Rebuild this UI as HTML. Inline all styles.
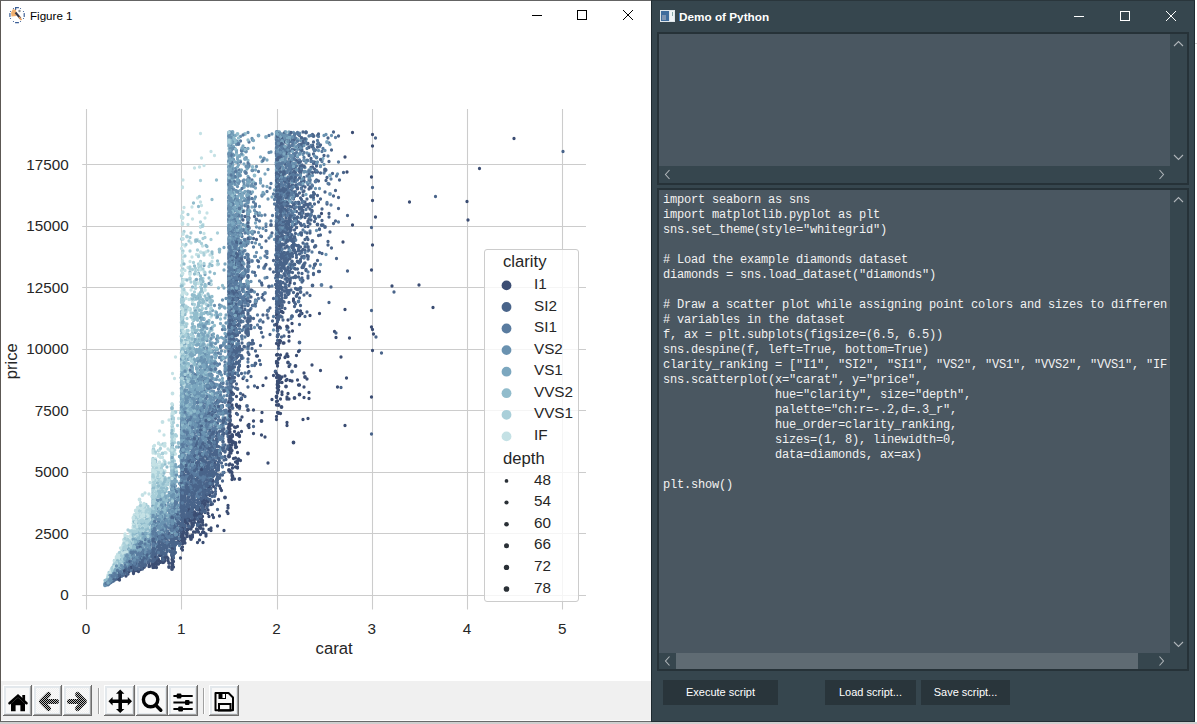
<!DOCTYPE html><html><head><meta charset="utf-8"><style>
*{margin:0;padding:0;box-sizing:border-box}
html,body{width:1197px;height:724px;overflow:hidden;background:#cfcfcf;position:relative;font-family:"Liberation Sans",sans-serif}
.abs{position:absolute}
#lw{left:0;top:0;width:651px;height:722px;background:#fff;border-left:1px solid #5c5854;border-top:1px solid #646464;border-bottom:1px solid #6a6a6a}
#tb{left:1px;top:681px;width:650px;height:40px;background:#f0f0f0}
.btn{position:absolute;top:5px;height:30px;background:#f0f0f0;border-top:1px solid #fff;border-left:1px solid #fff;border-right:1px solid #6d6d6d;border-bottom:1px solid #6d6d6d;box-shadow:inset -1px -1px 0 #a0a0a0}
.sep{position:absolute;top:7px;width:2px;height:26px;border-left:1px solid #a0a0a0;border-right:1px solid #fff}
#rw{left:651px;top:0;width:544px;height:722px;background:#36464e;border-left:1px solid #1e2a30;border-top:1px solid #2a363c;border-right:1px solid #1e2a30;border-bottom:1px solid #222e34}
.panel{position:absolute;background:#4a5761;border:2px solid #263238}
.code{position:absolute;left:663px;top:193px;font-family:"Liberation Mono",monospace;font-size:12px;letter-spacing:-0.2px;line-height:15px;color:#f2f2f2;white-space:pre}
.sb{position:absolute;background:#36464e}
.sbtn{position:absolute;top:680px;height:25px;background:#29353b;color:#fff;font-size:11px;text-align:center;line-height:25px}
</style></head><body>
<div id="lw" class="abs"></div>
<div class="abs" style="left:30px;top:9px;font-size:11.6px;color:#000">Figure 1</div>
<svg class="abs" style="left:0;top:0" width="651" height="31">
 <g fill="#3a5e96">
  <rect x="15" y="7" width="4" height="1.2" rx="0.5"/><rect x="15" y="22" width="4" height="1.2" rx="0.5"/>
  <rect x="9.3" y="13" width="1.2" height="4" rx="0.5"/><rect x="23.6" y="13" width="1.2" height="4" rx="0.5"/>
  <circle cx="13.5" cy="8.5" r="0.6"/><circle cx="20.5" cy="8.5" r="0.6"/><circle cx="10.5" cy="11.5" r="0.6"/><circle cx="23.5" cy="11.5" r="0.6"/>
  <circle cx="10.5" cy="18.5" r="0.6"/><circle cx="23.5" cy="18.5" r="0.6"/><circle cx="13.5" cy="21.5" r="0.6"/><circle cx="20.5" cy="21.5" r="0.6"/>
  <rect x="15" y="7" width="1.2" height="3"/>
 </g>
 <path d="M13 9l3 1 0.5 6-5 0.5-0.5-4z" fill="#f0b070"/>
 <path d="M15.5 12.5l5 6" stroke="#334" stroke-width="2"/>
 <path d="M19 17l2.5 3" stroke="#e8a060" stroke-width="1.8"/>
 <circle cx="19.5" cy="11" r="1.2" fill="#8a8f99"/>
 <path d="M532 15.5h10" stroke="#000" stroke-width="1"/>
 <rect x="577.5" y="10.5" width="9" height="9" fill="none" stroke="#000" stroke-width="1"/>
 <path d="M623 10l10 10M633 10l-10 10" stroke="#000" stroke-width="1"/>
</svg>
<svg width="1197" height="724" style="position:absolute;left:0;top:0"><g stroke="#cccccc" stroke-width="1.1"><line x1="86.5" y1="109.0" x2="86.5" y2="609.5"/><line x1="181.5" y1="109.0" x2="181.5" y2="609.5"/><line x1="277.5" y1="109.0" x2="277.5" y2="609.5"/><line x1="372.5" y1="109.0" x2="372.5" y2="609.5"/><line x1="467.5" y1="109.0" x2="467.5" y2="609.5"/><line x1="562.5" y1="109.0" x2="562.5" y2="609.5"/><line x1="82.2" y1="595.5" x2="586.0" y2="595.5"/><line x1="82.2" y1="533.5" x2="586.0" y2="533.5"/><line x1="82.2" y1="472.5" x2="586.0" y2="472.5"/><line x1="82.2" y1="410.5" x2="586.0" y2="410.5"/><line x1="82.2" y1="349.5" x2="586.0" y2="349.5"/><line x1="82.2" y1="287.5" x2="586.0" y2="287.5"/><line x1="82.2" y1="226.5" x2="586.0" y2="226.5"/><line x1="82.2" y1="164.5" x2="586.0" y2="164.5"/></g><g transform="scale(0.5)" fill="none" stroke-linecap="round"><path stroke="#3b4d73" stroke-width="6.6" d="M0 0m608 746h0m-9 24h0m-135 15h0m110 13h0m-19 27h0m6 2h0m-101 11h0m93-5h0m-72 7h0m2 23h0m-18 10h0m65 1h0m-72 25h0m17 35h0m-15 10h0m-31 58h0m-2 33h0m-22 6h0m30 11h0m-48 12h0m18 1h0m-37 11h0m-32 45h0m-30 14h0"/><path stroke="#49648a" stroke-width="7.6" d="M0 0m597 405h0m23 3h0m-40 31h0m-88 51h0m103 33h0m-42 28h0m27 10h0m4 72h0m-113 83h0m6 24h0m-19 91h0m-21 100h0"/><path stroke="#597b9f" stroke-width="7.6" d="M0 0m633 328h0m-152 104h0m15 233h0"/><path stroke="#49648a" stroke-width="6.6" d="M0 0m677 272h0m-69 49h0m-4 9h0m0 2h0m14 14h0m13-2h0m34 3h0m-106 12h0m44 3h0m3 9h0m14 3h0m38-6h0m-48 36h0m-44 9h0m46-4h0m-38 12h0m19 2h0m51-5h0m-148 12h0m68 3h0m31 1h0m34 9h0m-65 22h0m-11 7h0m8 21h0m9 18h0m-38 18h0m25 14h0m80 0h0m-71 22h0m23 2h0m-103 12h0m29 10h0m38-3h0m6 21h0m-54 4h0m88 12h0m-114 21h0m2 0h0m74 0h0m21 11h0m-21 7h0m13 10h0m-68 15h0m-35 3h0m107 22h0m-95 14h0m42-5h0m-36 26h0m-23 58h0m2-3h0m-4 13h0m2 10h0m-14 59h0m-13 9h0m-2 84h0m-15 12h0m-27 25h0m36-6h0m-47 27h0m-27 55h0m-2 17h0"/><path stroke="#3b4d73" stroke-width="7.6" d="M0 0m460 841h0m-172 293h0m18-5h0"/><path stroke="#a9cfd9" stroke-width="7.6" d="M0 0m370 618h0m-63 281h0"/><path stroke="#c4e1e5" stroke-width="7.6" d="M0 0m412 571h0"/><path stroke="#7ca7bf" stroke-width="7.6" d="M0 0m477 361h0m-61 250h0m57 54h0"/><path stroke="#a9cfd9" stroke-width="6.6" d="M0 0m382 466h0m0 132h0m30 10h0m-44 14h0m-24 244h0m-4 96h0m-67 65h0m27 3h0"/><path stroke="#c4e1e5" stroke-width="6.6" d="M0 0m366 360h0m18 54h0m26 22h0m-40 56h0m27 19h0m11 32h0m-43 35h0m-21 252h0m-38 72h0m19 13h0m-50 100h0m-8 27h0m-13 31h0"/><path stroke="#7ca7bf" stroke-width="6.6" d="M0 0m553 270h0m4-6h0m-84 37h0m10 0h0m70-5h0m-65 32h0m46 45h0m78 16h0m-135 16h0m13-4h0m-7 16h0m-61 152h0m-2 58h0m21 20h0m-75 8h0m35-2h0m30 47h0m-7 15h0m-35 8h0m2-1h0m38 0h0m-44 19h0m37-3h0m-10 12h0m23-5h0m-78 149h0m-27 90h0m4 37h0"/><path stroke="#6a92b0" stroke-width="7.6" d="M0 0m458 395h0m26-3h0m153 41h0m-158 33h0m-21 185h0m-10 37h0m0 113h0"/><path stroke="#597b9f" stroke-width="6.6" d="M0 0m635 271h0m-27 7h0m6 10h0m25 5h0m-48 14h0m38 17h0m-63 15h0m29 30h0m-112 35h0m85-1h0m-89 24h0m74 8h0m11-3h0m29 15h0m84-3h0m-145 17h0m-48 12h0m88 0h0m44 29h0m8 2h0m-113 9h0m-30 16h0m7 40h0m56 3h0m-73 4h0m10 13h0m36 8h0m-40 45h0m38 8h0m-44 44h0m19 0h0m-4 22h0m-53 11h0m38 19h0m-6 12h0m-36 10h0m2 37h0m12 45h0m3 2h0m-1 6h0m-4 37h0"/><path stroke="#91bccc" stroke-width="6.6" d="M0 0m467 276h0m12 106h0m-55 17h0m-23 66h0m11 26h0m74 35h0m-57 21h0m-24 38h0m11 3h0m-13 32h0m-40 11h0m0 4h0m34 18h0m-34 5h0m55 8h0m-40 15h0m13 20h0m-15 26h0m51 12h0m-68 174h0m-6 36h0m-19 43h0"/><path stroke="#6a92b0" stroke-width="6.6" d="M0 0m650 301h0m-44 8h0m10 12h0m-44 10h0m103 17h0m-168 25h0m84 15h0m-6 46h0m-99 15h0m96 32h0m-80 82h0m7 21h0m-57 13h0m-13 13h0m-33 49h0m141 1h0m-133 21h0m36 35h0m6 18h0m-40 31h0m30 0h0m-15 8h0m31-2h0m-50 12h0m25 14h0m-6 47h0m-80 128h0m-13 57h0m0 3h0"/><path stroke="#3b4d73" stroke-width="7.6" d="M0 0m599 789h0m-10 7h0m-131 10h0m17 116h0"/><path stroke="#6a92b0" stroke-width="6.6" d="M0 0m473 282h0m145 26h0m-29 11h0m-93 16h0m114 0h0m-135 13h0m15-4h0m36 28h0m-38 14h0m40 2h0m-40 13h0m101 22h0m-105 15h0m149 23h0m-116 4h0m-36 16h0m160 48h0m-111 27h0m-55 11h0m9 34h0m-55 10h0m-9 122h0m2-4h0m-35 18h0m2 31h0m54 17h0m5-3h0m-24 14h0m22 49h0m-7 1h0m-90 118h0m-11 26h0m0 20h0"/><path stroke="#a9cfd9" stroke-width="6.6" d="M0 0m422 479h0m-31 4h0m10 47h0m-6 36h0m-30 11h0m-2 25h0m0 11h0m3 0h0m0 24h0m6 11h0m15 12h0m-15 6h0m-9 19h0m51 47h0m-59 119h0m-10 66h0m-15 74h0m-45 31h0"/><path stroke="#91bccc" stroke-width="6.6" d="M0 0m469 285h0m-36 75h0m-11 202h0m15 14h0m-19 16h0m-23 45h0m4 15h0m-15 16h0m26 7h0m-36 37h0m11 4h0m-22 27h0m-18 172h0m-3 58h0m-8 4h0m8 23h0m-40 26h0"/><path stroke="#49648a" stroke-width="6.6" d="M0 0m597 269h0m-31 4h0m21 14h0m12 8h0m5-2h0m14 1h0m9 33h0m-38 15h0m2-6h0m0 37h0m12 3h0m3 15h0m29 0h0m-48 7h0m-7 3h0m11 4h0m38 3h0m-59 15h0m88 4h0m13 15h0m-107 11h0m46 0h0m-66 13h0m32 16h0m-12 16h0m54 2h0m21 5h0m-86 14h0m40-4h0m-97 11h0m65-3h0m2 3h0m-2 3h0m-14 15h0m10 2h0m-34 20h0m41 13h0m4 3h0m4-6h0m6 11h0m42 4h0m-56 6h0m-80 10h0m84-3h0m-15 11h0m61 9h0m-137 15h0m11-6h0m122 0h0m-65 9h0m21-2h0m-87 11h0m15 0h0m-15 14h0m61 4h0m15 1h0m-67 23h0m8 0h0m25-2h0m-56 5h0m0 54h0m44 22h0m-64 52h0m-6 16h0m-6 38h0m15 17h0m-3 38h0m-20 5h0m12-2h0m-2 24h0m-21 22h0m4 1h0m-4 14h0m-61 76h0m-19 22h0m6-2h0m9 1h0m-17 14h0"/><path stroke="#597b9f" stroke-width="7.6" d="M0 0m458 550h0m25 45h0m-35 227h0"/><path stroke="#6a92b0" stroke-width="7.6" d="M0 0m458 386h0m38 42h0"/><path stroke="#7ca7bf" stroke-width="6.6" d="M0 0m496 297h0m-19 33h0m-6 39h0m4 26h0m69-1h0m-130 206h0m0 57h0m21 42h0m-46 10h0m35 95h0m-71 130h0m-17 96h0"/><path stroke="#a9cfd9" stroke-width="7.6" d="M0 0m363 572h0m-12 252h0"/><path stroke="#c4e1e5" stroke-width="6.6" d="M0 0m363 435h0m-12 279h0m-34 173h0m-10 6h0m14-3h0m9 52h0m-66 119h0m-21 39h0"/><path stroke="#597b9f" stroke-width="6.6" d="M0 0m637 273h0m-139 11h0m74-1h0m8-3h0m-101 60h0m7 22h0m67 7h0m38 14h0m-116 1h0m32 20h0m-34 18h0m126-4h0m-31 10h0m71 31h0m-143 23h0m-21 17h0m103 1h0m25 6h0m-126 27h0m6 0h0m34 1h0m0-1h0m53 25h0m-112 9h0m53 33h0m-66 59h0m-8 47h0m13 18h0m0 7h0m21-3h0m-47 28h0m-2 5h0m30 15h0m10 4h0m-25 5h0m-15 160h0m-82 89h0"/><path stroke="#3b4d73" stroke-width="6.6" d="M0 0m580 566h0m15 22h0m-8 10h0m-28 14h0m2 146h0m-99 32h0m114-3h0m-32 12h0m17-1h0m17 0h0m-25 5h0m-93 30h0m114 18h0m-116 59h0m-36 99h0m-17 13h0m-21 3h0m19 2h0m-12 8h0m10 9h0m21 12h0m-48 12h0m21 17h0m-82 37h0m6 1h0m-42 20h0"/><path stroke="#c4e1e5" stroke-width="7.6" d="M0 0m233 1114h0"/><path stroke="#49648a" stroke-width="7.6" d="M0 0m603 276h0m-50 53h0m72 242h0m-24 5h0m-143 26h0m106 8h0m-28 11h0m-69 51h0m31 15h0m-23 91h0m-137 297h0"/><path stroke="#91bccc" stroke-width="7.6" d="M0 0m509 351h0m-120 245h0m-15 77h0"/><path stroke="#7ca7bf" stroke-width="7.6" d="M0 0m465 341h0m88 30h0"/><path stroke="#c4e1e5" stroke-width="6.6" d="M0 0m365 374h0m-2 58h0m2 57h0m11 46h0m-11 29h0m-2 33h0m3 39h0m56-2h0m-59 21h0m-35 274h0m-47 76h0m-8 26h0m-21 43h0m8-2h0m-50 94h0"/><path stroke="#a9cfd9" stroke-width="7.6" d="M0 0m399 630h0"/><path stroke="#597b9f" stroke-width="6.6" d="M0 0m564 269h0m6 7h0m29 13h0m-17 38h0m40-4h0m-23 5h0m-94 13h0m147-1h0m21 12h0m-177 13h0m6 22h0m87-2h0m-93 56h0m112 8h0m-34 11h0m-65 4h0m73 5h0m-4 26h0m-46 8h0m-61 28h0m25 20h0m-17 39h0m0 2h0m4 25h0m-16 25h0m6 49h0m-34 24h0m4 51h0m-35 19h0m44 15h0m-28 14h0m21-3h0m-10 12h0m0 45h0m-11 33h0m-71 84h0m2 26h0m-17 44h0"/><path stroke="#3b4d73" stroke-width="6.6" d="M0 0m566 625h0m38 2h0m-45 59h0m2-4h0m-29 74h0m-70 12h0m146 6h0m-133 40h0m-2 13h0m-13 78h0m2 37h0m-23 30h0m-54 61h0m4 12h0m-15 20h0"/><path stroke="#a9cfd9" stroke-width="6.6" d="M0 0m401 444h0m-35 58h0m-1 20h0m34 10h0m19 1h0m-33 6h0m4 45h0m14 2h0m-37 57h0m2 2h0m31 52h0m-15 20h0m-46 209h0m-12 23h0m6 22h0m-30 47h0m-14 6h0"/><path stroke="#6a92b0" stroke-width="6.6" d="M0 0m553 269h0m59 9h0m-46 34h0m-76 31h0m107-2h0m-133 11h0m57 9h0m-33 10h0m-17 13h0m101 19h0m15 3h0m-68 7h0m82 23h0m-122 16h0m40 4h0m-46 9h0m10 4h0m114 0h0m-99 5h0m91-1h0m10 53h0m-101 57h0m-21 3h0m-74 67h0m42 38h0m-33 23h0m31 6h0m11 43h0m-40 12h0m21 54h0m6 46h0m-80 130h0"/><path stroke="#6a92b0" stroke-width="7.6" d="M0 0m603 298h0m-145 210h0m-63 87h0m86 13h0m-48 250h0"/><path stroke="#49648a" stroke-width="7.6" d="M0 0m572 526h0m-17 147h0m-71 26h0m67 44h0m-106 127h0m-20 76h0m0 6h0"/><path stroke="#49648a" stroke-width="6.6" d="M0 0m574 286h0m27 8h0m0 5h0m62 1h0m-13 42h0m-84 19h0m86 0h0m-42 13h0m-44 6h0m10-3h0m0 30h0m61-3h0m-71 7h0m33 3h0m-90 19h0m107 9h0m-23 13h0m48 15h0m-118 3h0m87 6h0m-51 5h0m47 2h0m-32 8h0m13 0h0m42 0h0m-19 7h0m-42 7h0m2-2h0m10 11h0m-12 5h0m33 1h0m-16 7h0m21 5h0m-97 10h0m69 0h0m-17 7h0m13 4h0m42-4h0m0 4h0m-114 38h0m68 1h0m29 1h0m-38 5h0m2 2h0m15 2h0m-88 14h0m0 17h0m67 3h0m4-7h0m-90 24h0m-6 29h0m12-3h0m2 14h0m76 13h0m-76 13h0m-8 54h0m-9 8h0m17 33h0m-44 30h0m21 9h0m-19 37h0m-8 12h0m2 58h0m-11 9h0m-8 19h0m13-6h0m-41 52h0m-10 7h0m-25 54h0"/><path stroke="#7ca7bf" stroke-width="7.6" d="M0 0m458 401h0"/><path stroke="#91bccc" stroke-width="7.6" d="M0 0m410 573h0m-11 103h0m32 82h0m-68 62h0"/><path stroke="#597b9f" stroke-width="7.6" d="M0 0m580 344h0m9 12h0m-112 88h0m21 12h0m-15 41h0m-63 264h0m-194 401h0"/><path stroke="#3b4d73" stroke-width="7.6" d="M0 0m555 784h0m-76 29h0m-78 243h0"/><path stroke="#7ca7bf" stroke-width="6.6" d="M0 0m568 272h0m-15 23h0m-65 6h0m33 13h0m-54 34h0m134 5h0m2 6h0m-145 15h0m7 31h0m-17 90h0m29-7h0m-67 61h0m-2 112h0m-13 13h0m-6 10h0m38 10h0m-3 37h0m19 45h0m-8 15h0m-84 138h0m8 66h0m-17 13h0"/><path stroke="#91bccc" stroke-width="6.6" d="M0 0m389 591h0m8 15h0m23-2h0m5-2h0m-57 8h0m54 0h0m-10 7h0m-23 13h0m14-1h0m-21 5h0m36 13h0m-46 6h0m57-2h0m-45 36h0m24-6h0m-45 43h0m0 24h0m-19 127h0m-12 154h0m-32 6h0m2 30h0"/><path stroke="#91bccc" stroke-width="6.6" d="M0 0m471 283h0m-91 261h0m38 12h0m-31 70h0m23-1h0m-21 8h0m29 8h0m2 21h0m-8 46h0m-42 25h0m-17 161h0m-23 34h0m6 39h0m-6 60h0m-101 94h0"/><path stroke="#6a92b0" stroke-width="7.6" d="M0 0m458 324h0m9 29h0m193 35h0m-75 8h0m-127 23h0m0 12h0m32 54h0"/><path stroke="#597b9f" stroke-width="6.6" d="M0 0m580 276h0m57 10h0m-42 28h0m61-2h0m6 46h0m-67 2h0m21 9h0m-82 14h0m-65 6h0m78-1h0m35 34h0m-115 16h0m103 16h0m-7 25h0m-10 6h0m-57 34h0m0 24h0m9 1h0m-19 39h0m18-1h0m-46 7h0m30 4h0m14 24h0m80 20h0m-90 22h0m-40 14h0m23 36h0m-50 56h0m0 43h0m18 54h0m-6 15h0m4 2h0m-4 46h0"/><path stroke="#6a92b0" stroke-width="6.6" d="M0 0m570 301h0m-112 7h0m38 22h0m112 13h0m2 0h0m15 8h0m-146 12h0m-15 11h0m3 4h0m17 9h0m4 35h0m101 17h0m-57 9h0m-36 39h0m-21 102h0m11 70h0m-51 14h0m-19 27h0m-32 12h0m40 38h0m30 29h0m-95 154h0m0 34h0m-8 19h0"/><path stroke="#c4e1e5" stroke-width="7.6" d="M0 0m435 529h0m-55 19h0m-101 451h0m-12 38h0"/><path stroke="#c4e1e5" stroke-width="6.6" d="M0 0m401 267h0m2 144h0m-38 14h0m1 10h0m40 14h0m-11 30h0m10 13h0m-40 14h0m32 4h0m-34 21h0m34 57h0m-2 85h0m-50 151h0m12 13h0m-13 5h0m1 6h0m-26 14h0m-2 24h0m-6 21h0m0 11h0m-36 107h0m-25 43h0"/><path stroke="#a9cfd9" stroke-width="6.6" d="M0 0m366 538h0m8 50h0m-8 44h0m-3 30h0m24 44h0m0 11h0m-42 93h0m4 75h0m-23 3h0m-3 63h0m-31 58h0m12 26h0"/><path stroke="#3b4d73" stroke-width="7.6" d="M0 0m576 725h0m-23 68h0m-137 210h0m-107 131h0"/><path stroke="#3b4d73" stroke-width="6.6" d="M0 0m578 682h0m-4 26h0m40 50h0m-59 10h0m-93 29h0m19 2h0m26 21h0m-49 4h0m11 30h0m2 1h0m36 12h0m-66 110h0m-17 7h0m1 46h0m-41 17h0m0 4h0m-2 7h0m-2 16h0m-63 45h0m-19 8h0m-12 6h0m-13 8h0m-17 7h0"/><path stroke="#7ca7bf" stroke-width="7.6" d="M0 0m458 367h0m-48 287h0m-15 35h0m27 112h0"/><path stroke="#a9cfd9" stroke-width="7.6" d="M0 0m363 706h0"/><path stroke="#49648a" stroke-width="7.6" d="M0 0m631 326h0m-38 64h0m-32 16h0m55 23h0m6 1h0m-35 70h0m4 5h0m-95 15h0m-19 109h0m-12 107h0m-129 348h0"/><path stroke="#91bccc" stroke-width="7.6" d="M0 0m345 929h0"/><path stroke="#49648a" stroke-width="6.6" d="M0 0m618 295h0m-36 45h0m2-2h0m-14 10h0m52 28h0m-16 8h0m-42 28h0m25-4h0m15 7h0m-40 2h0m12 2h0m30 7h0m-108 10h0m95 4h0m8 7h0m66 0h0m-66 1h0m43 3h0m2-1h0m-62 20h0m19 0h0m-21 3h0m15 20h0m2 15h0m2 11h0m-117 11h0m147-2h0m-19 13h0m-42 10h0m21 1h0m-38 10h0m8 1h0m45-2h0m-129 34h0m13 3h0m63-5h0m4 14h0m-61 1h0m59 1h0m8 3h0m-8 6h0m-2 7h0m-27 19h0m-68 10h0m11-4h0m14 67h0m-16 11h0m12 4h0m-8 15h0m-11 27h0m13-6h0m-28 35h0m62 50h0m-64 73h0m-19 13h0m-4 10h0m25 1h0m-10 17h0m-19 31h0m-21 33h0m-8 19h0m-36 21h0m4 13h0"/><path stroke="#7ca7bf" stroke-width="6.6" d="M0 0m467 293h0m8 21h0m91 29h0m-45 23h0m-21 20h0m9 12h0m-26 36h0m91 22h0m-88 29h0m-36 43h0m21 7h0m-74 12h0m51 29h0m-28 19h0m32 35h0m-51 64h0m-14 3h0m12 9h0m47 11h0m-53 18h0m34 65h0m-11 30h0m30 0h0m-97 104h0m12 36h0m-8 41h0m-23 14h0m-120 146h0"/><path stroke="#597b9f" stroke-width="7.6" d="M0 0m557 271h0m-99 206h0m38 57h0m32 2h0m-49 82h0m-42 251h0"/><path stroke="#6a92b0" stroke-width="7.6" d="M0 0m570 269h0m-6 131h0m16 102h0m-116 3h0m-52 225h0m-23 37h0m-44 151h0"/><path stroke="#91bccc" stroke-width="6.6" d="M0 0m467 271h0m29 9h0m-23 27h0m13 3h0m-5 12h0m-78 247h0m-2 16h0m-6 8h0m6 1h0m5 7h0m16 3h0m-14 23h0m-5 6h0m-38 10h0m22-2h0m38 13h0m-32 30h0m23 6h0m9 3h0m-26 40h0m-55 105h0m-46 211h0"/><path stroke="#3b4d73" stroke-width="7.6" d="M0 0m563 623h0m-6 203h0"/><path stroke="#c4e1e5" stroke-width="7.6" d="M0 0m365 588h0m15 32h0m-35 167h0m-19 159h0"/><path stroke="#91bccc" stroke-width="7.6" d="M0 0m490 268h0m-152 689h0"/><path stroke="#49648a" stroke-width="7.6" d="M0 0m625 291h0m-28 210h0m7 13h0m-133 157h0m-4 48h0m-32 182h0m-10 63h0m-64 97h0"/><path stroke="#3b4d73" stroke-width="6.6" d="M0 0m587 602h0m52 25h0m-54 35h0m84 1h0m-202 125h0m57 37h0m92 12h0m-156 14h0m38 4h0m-36 41h0m3 34h0m10 6h0m-48 37h0m-15 18h0m-23 33h0m50 8h0m-67 27h0m-59 67h0m17-5h0"/><path stroke="#6a92b0" stroke-width="6.6" d="M0 0m652 269h0m-194 8h0m110 2h0m10 61h0m-74 31h0m-37 19h0m42 24h0m90-5h0m-134 16h0m117 7h0m-94 96h0m-30 21h0m13 0h0m17 34h0m-43 17h0m-40 79h0m20 23h0m-9 9h0m-11 10h0m5 28h0m23 37h0m-11 23h0m-65 169h0"/><path stroke="#49648a" stroke-width="6.6" d="M0 0m608 286h0m-30 4h0m2 3h0m-12 7h0m90 23h0m-33 11h0m-72 5h0m46 47h0m28 4h0m-38 3h0m88 2h0m-80 12h0m19 7h0m8 7h0m-71 10h0m50-1h0m-107 4h0m108-1h0m-38 16h0m12 0h0m65 1h0m-90 41h0m32 0h0m-11 18h0m2 2h0m40 7h0m13 13h0m-68 44h0m9 7h0m4-1h0m-15 4h0m5 27h0m-9 7h0m2 12h0m-93 13h0m1-1h0m12 6h0m84 7h0m-63 34h0m-2 6h0m103 5h0m-78 28h0m-56 12h0m31 5h0m-36 19h0m0 32h0m-2 6h0m-29 10h0m2 6h0m15 7h0m2 0h0m27 3h0m-44 22h0m15 21h0m0 29h0m4 3h0m-11 17h0m-8 10h0m6 2h0m-17 9h0m-6 24h0m-29 52h0m20 2h0m-10 7h0m-65 84h0"/><path stroke="#7ca7bf" stroke-width="6.6" d="M0 0m467 311h0m12 1h0m11 5h0m6 50h0m-12 19h0m-13 10h0m27-3h0m6 21h0m-23 80h0m3 53h0m-59 74h0m-17 18h0m-5 27h0m22 20h0m0 18h0m2 79h0m-45 34h0m-31 161h0m-15 14h0m0 46h0"/><path stroke="#a9cfd9" stroke-width="6.6" d="M0 0m458 316h0m-52 161h0m-34 12h0m29 34h0m-36 84h0m66 16h0m-66 45h0m-18 171h0m-2 44h0m-28 18h0m-6 3h0m-5 21h0m-16 89h0m10 6h0"/><path stroke="#7ca7bf" stroke-width="7.6" d="M0 0m429 742h0"/><path stroke="#597b9f" stroke-width="6.6" d="M0 0m585 291h0m37 0h0m-38 8h0m-31 10h0m91 14h0m-24 20h0m-36 3h0m7 5h0m-87 9h0m72 11h0m-27 28h0m2-6h0m71-1h0m-18 13h0m-93 7h0m151-2h0m-132 20h0m15 1h0m19 0h0m65 3h0m-150 9h0m17 18h0m-19 11h0m-4 44h0m61-1h0m-55 20h0m-2 15h0m0-6h0m-19 39h0m19-5h0m0 59h0m44 3h0m-48 19h0m-4 22h0m27 7h0m-21 58h0m-11 10h0m-19 42h0m-29 5h0m15 56h0m-82 153h0m10-2h0m-19 14h0m-42 94h0m-78 48h0"/><path stroke="#597b9f" stroke-width="7.6" d="M0 0m490 411h0m4 39h0m-19 216h0m-17 43h0"/><path stroke="#c4e1e5" stroke-width="6.6" d="M0 0m365 446h0m15 77h0m-17 29h0m28 8h0m31 8h0m-52 16h0m-4 38h0m23-1h0m-4 18h0m-22 16h0m0 59h0m-18 139h0m-17 17h0m21 7h0m-19 15h0m6 6h0m-30 8h0m26 0h0m-15 40h0m-46 75h0m-4 21h0"/><path stroke="#597b9f" stroke-width="6.6" d="M0 0m553 264h0m0 21h0m25-2h0m17-1h0m-105 15h0m88 21h0m30-3h0m-127 9h0m108 3h0m-15 38h0m-21 5h0m71 0h0m-153 23h0m141 26h0m-42 7h0m-74 14h0m-21 24h0m6 1h0m-2 32h0m5 12h0m31 12h0m-46 18h0m27 1h0m-21 58h0m32 13h0m4 1h0m-15 112h0m-114 9h0m68 9h0m4-2h0m-4 7h0m-55 20h0m57 14h0m2 10h0m-34 16h0m15-1h0m-6 10h0m2 15h0m6 9h0m17 0h0m-8 9h0m-11 34h0m10 31h0m-105 142h0"/><path stroke="#a9cfd9" stroke-width="7.6" d="M0 0m384 676h0"/><path stroke="#7ca7bf" stroke-width="7.6" d="M0 0m465 267h0m-43 644h0m-124 137h0"/><path stroke="#3b4d73" stroke-width="7.6" d="M0 0m555 726h0m-76 232h0m-78 65h0m-95 104h0m0-2h0m39 4h0"/><path stroke="#a9cfd9" stroke-width="6.6" d="M0 0m465 271h0m-100 288h0m41-2h0m-5 17h0m-38 76h0m7 3h0m6 9h0m-13 90h0m-18 133h0m-39 32h0m24 54h0m-32 49h0m-6 8h0m-44 51h0m-38 88h0"/><path stroke="#c4e1e5" stroke-width="6.6" d="M0 0m403 316h0m-8 80h0m-29 28h0m48 2h0m-29 12h0m-3 48h0m-16 28h0m31 19h0m-32 16h0m17 31h0m-63 320h0m-12 37h0m-59 148h0m-13 24h0m-2 6h0"/><path stroke="#6a92b0" stroke-width="7.6" d="M0 0m473 403h0m-15 51h0m30 36h0m-7 32h0m-23 53h0"/><path stroke="#91bccc" stroke-width="7.6" d="M0 0m458 282h0m-17 503h0m-97 121h0"/><path stroke="#91bccc" stroke-width="6.6" d="M0 0m401 590h0m11 7h0m-47 13h0m19 45h0m21 0h0m7-7h0m-47 11h0m36 2h0m13 9h0m8 19h0m-40 32h0m-4 96h0m-34 108h0m-18 28h0m2 35h0m8 6h0"/><path stroke="#7ca7bf" stroke-width="6.6" d="M0 0m595 278h0m-109 14h0m-11 26h0m124 13h0m-103 22h0m-27 30h0m21 0h0m-6 7h0m12-1h0m-12 31h0m-89 220h0m51 12h0m-57 27h0m46-7h0m-40 48h0m34 12h0m25 16h0m-42 25h0m21 20h0"/><path stroke="#597b9f" stroke-width="7.6" d="M0 0m458 404h0m21 299h0"/><path stroke="#6a92b0" stroke-width="6.6" d="M0 0m544 268h0m-63 5h0m131 6h0m-147 5h0m101-3h0m21 11h0m-103 10h0m160 18h0m-64 29h0m-27 8h0m-84 11h0m2 13h0m4 2h0m-6 11h0m109 6h0m-120 10h0m65 21h0m55-5h0m-82 19h0m30 12h0m-36 44h0m23 4h0m-44 40h0m-51 22h0m34 79h0m-28 24h0m28 13h0m-38 20h0m27 5h0m2 7h0m3-1h0m-7 33h0m-17 20h0m7 8h0m-13 3h0m2 56h0m-86 162h0m23 14h0m-55 60h0m-90 98h0"/><path stroke="#3b4d73" stroke-width="6.6" d="M0 0m584 647h0m-29 10h0m-69 100h0m69 14h0m9 18h0m-66 60h0m-33 22h0m-1 11h0m1 4h0m-5 9h0m-23 104h0m-59 41h0m-8 14h0m-4 17h0m40 14h0m-93 35h0m-55 23h0"/><path stroke="#49648a" stroke-width="7.6" d="M0 0m627 272h0m-26 74h0m-12 91h0m-5 86h0m-21 63h0m-128 216h0m-4 145h0"/><path stroke="#49648a" stroke-width="6.6" d="M0 0m667 264h0m-83 101h0m49-5h0m-55 8h0m11 49h0m-13 9h0m19 9h0m-23 18h0m48-5h0m19 10h0m-36 8h0m11 0h0m-25 23h0m-36 9h0m38 7h0m-30 9h0m17 2h0m-80 9h0m78-5h0m59 1h0m-53 16h0m45 12h0m-64 4h0m15 5h0m-27 11h0m19 5h0m-103 9h0m97-7h0m27 1h0m-97 8h0m32 4h0m63 16h0m-93 6h0m74 6h0m-36 13h0m67-2h0m-105 11h0m0 6h0m61 24h0m-52 12h0m2 6h0m48-6h0m-82 15h0m0 20h0m6 7h0m-21 24h0m7 52h0m-3 15h0m11-5h0m-13 33h0m-27 36h0m23 16h0m-21 35h0m-15 24h0m25 9h0m-37 25h0m12-1h0m-25 7h0m-11 35h0m9 10h0m-65 62h0m-3 7h0m-33 23h0m-7 8h0"/><path stroke="#a9cfd9" stroke-width="7.6" d="M0 0m408 661h0m-63 227h0m-26 71h0"/><path stroke="#49648a" stroke-width="6.6" d="M0 0m572 310h0m0 4h0m4 10h0m53 14h0m-70 17h0m49 0h0m46 0h0m-17 7h0m-19 16h0m9 7h0m-24 14h0m-29 13h0m10 2h0m-31 6h0m67-2h0m-36 12h0m30 1h0m-53 13h0m5 5h0m-13 11h0m0-2h0m38 9h0m46 4h0m-65 12h0m12-1h0m9 9h0m4 0h0m-38 10h0m4-3h0m43 1h0m-43 6h0m-10 10h0m-36 8h0m51 9h0m61-3h0m-89 9h0m13 4h0m74 5h0m-63 7h0m27 1h0m-9 25h0m13-1h0m-25 11h0m-23 7h0m6 24h0m-17 15h0m-34 15h0m-31 6h0m2 67h0m29 29h0m-42 24h0m0 25h0m-12 56h0m2 32h0m-30 17h0m11 2h0m2 5h0m19 5h0m-38 34h0m10 0h0m-35 42h0m21-1h0m-28 10h0m7 24h0m-2 12h0m8 7h0m-53 13h0m15-2h0m-2 19h0m-6 7h0m-15 16h0m-34 22h0"/><path stroke="#c4e1e5" stroke-width="7.6" d="M0 0m365 582h0m-59 344h0"/><path stroke="#a9cfd9" stroke-width="6.6" d="M0 0m408 510h0m-11 30h0m-32 35h0m-2 68h0m3 8h0m10 39h0m9 4h0m-22 15h0m0 17h0m15 22h0m-59 162h0m-2 42h0m-21 61h0m-32 65h0"/><path stroke="#91bccc" stroke-width="6.6" d="M0 0m464 314h0m110-2h0m-67 52h0m-24 133h0m-52 133h0m-68 38h0m34 5h0m-19 14h0m-8 27h0m40 2h0m-38 12h0m42 41h0m-65 171h0m-19 24h0"/><path stroke="#7ca7bf" stroke-width="7.6" d="M0 0m488 374h0m-30 78h0"/><path stroke="#3b4d73" stroke-width="6.6" d="M0 0m559 716h0m17-3h0m-80 20h0m57 14h0m11 7h0m-5 11h0m-101 89h0m0 4h0m2 32h0m11 26h0m0 8h0m-13 6h0m7 6h0m-53 114h0m-17 10h0m27 1h0m-48 10h0m27-2h0m-57 64h0m-109 25h0"/><path stroke="#6a92b0" stroke-width="7.6" d="M0 0m458 462h0"/><path stroke="#49648a" stroke-width="7.6" d="M0 0m589 362h0m-9 117h0m51 13h0m-78 33h0m15 11h0m-110 17h0m103 16h0m-65 82h0m59 10h0m-61 151h0m-40 55h0m-25 65h0m-66 30h0m-117 188h0"/><path stroke="#c4e1e5" stroke-width="6.6" d="M0 0m365 375h0m36 129h0m-31 55h0m33 30h0m-58 239h0m-1 52h0m-25 44h0m-2 8h0m-38 90h0m-19 43h0"/><path stroke="#597b9f" stroke-width="7.6" d="M0 0m614 321h0m-116 36h0m19 73h0m74 50h0m-120 42h0m15 105h0m-34 67h0"/><path stroke="#6a92b0" stroke-width="6.6" d="M0 0m465 270h0m128-3h0m-120 22h0m122 10h0m-25 17h0m6 10h0m36-1h0m36 4h0m-181 17h0m8 18h0m131-2h0m-19 30h0m-110 23h0m108 9h0m-104 39h0m-8 8h0m4 6h0m72 2h0m-72 6h0m9 22h0m-5 58h0m-67 131h0m-17 27h0m-21 28h0m65-6h0m34 4h0m-59 9h0m-42 23h0m67 3h0m-2 11h0m-19 11h0m-204 363h0"/><path stroke="#3b4d73" stroke-width="7.6" d="M0 0m563 814h0m-105 126h0m-67 88h0"/><path stroke="#597b9f" stroke-width="6.6" d="M0 0m612 264h0m-15 26h0m-139 32h0m118 9h0m65 1h0m-88 9h0m95 5h0m-57 18h0m12 5h0m22 3h0m-161 14h0m15 3h0m21-5h0m-10 15h0m6 14h0m53-5h0m15 3h0m-97 55h0m8 19h0m78 16h0m32 7h0m-106 7h0m2 46h0m9 12h0m82-3h0m-53 72h0m-61 36h0m-17 17h0m24-1h0m-7 11h0m-50 60h0m19 28h0m-7 36h0m32-3h0m6 10h0m-17 6h0m-17 9h0m-4 45h0m13 20h0"/><path stroke="#7ca7bf" stroke-width="6.6" d="M0 0m471 271h0m111 12h0m-124 9h0m0 28h0m25 20h0m17 23h0m11 4h0m-23 30h0m-5 34h0m-18 49h0m4 23h0m-82 151h0m10-4h0m25 26h0m0 12h0m7 21h0m-23 8h0m-17 33h0m33 4h0m-14 21h0m4-3h0m4-3h0m-71 162h0m-17 54h0"/><path stroke="#3b4d73" stroke-width="6.6" d="M0 0m624 730h0m-27 40h0m-111 20h0m132 7h0m-63 5h0m-78 69h0m-6 24h0m-61 130h0m-34 14h0m29-6h0m-37 11h0m29 20h0m-27 14h0m4-5h0m-17 10h0m8 4h0m-31 27h0m-21 15h0"/><path stroke="#c4e1e5" stroke-width="7.6" d="M0 0m365 448h0m45 132h0m-65 264h0m-17 47h0"/><path stroke="#597b9f" stroke-width="7.6" d="M0 0m553 304h0m6 202h0m84 64h0m-185 86h0"/><path stroke="#91bccc" stroke-width="7.6" d="M0 0m462 270h0m-23 229h0m-74 98h0m32 14h0m-8 43h0"/><path stroke="#3b4d73" stroke-width="7.6" d="M0 0m464 870h0m32 37h0"/><path stroke="#597b9f" stroke-width="6.6" d="M0 0m625 323h0m-43 16h0m-29 27h0m21-3h0m-80 7h0m46 6h0m-69 24h0m113 5h0m5 26h0m-25 39h0m-26 6h0m32 3h0m-2 1h0m-91 39h0m19-4h0m80-2h0m-109 42h0m-9 15h0m23 0h0m-12 10h0m-4 33h0m16-5h0m55 14h0m-40 8h0m-19 22h0m-8 14h0m-59 54h0m78 34h0m-26 7h0m-48 11h0m23 6h0m19 48h0m-36 8h0m11-2h0m-4 11h0m23 2h0m-32 111h0m-82 84h0m-40 76h0"/><path stroke="#49648a" stroke-width="6.6" d="M0 0m599 271h0m26-2h0m-51 9h0m11 4h0m73 4h0m-69 13h0m0 13h0m-26 20h0m24 13h0m48-1h0m-32 21h0m15-5h0m-33 15h0m-13 21h0m69 2h0m-88 13h0m19 21h0m86 2h0m-76 9h0m11 12h0m-25 4h0m14 1h0m-25 8h0m-4 17h0m0 8h0m11-5h0m-11 12h0m50 2h0m-124 14h0m84 1h0m45-4h0m-40 13h0m-72 7h0m65 4h0m-82 17h0m84 0h0m-8 6h0m-31 35h0m42 8h0m-93 10h0m118-5h0m-84 29h0m77-5h0m-65 23h0m30-5h0m-57 16h0m4 5h0m0-1h0m-17 24h0m0 36h0m-21 12h0m2 17h0m-36 63h0m32 51h0m-10 10h0m-5 25h0m-23 23h0m15 10h0m-23 44h0m-25 34h0m8-1h0m-2 14h0m-145 117h0"/><path stroke="#a9cfd9" stroke-width="7.6" d="M0 0m395 628h0"/><path stroke="#49648a" stroke-width="7.6" d="M0 0m608 333h0m-40 141h0m57 8h0m-165 196h0m5 47h0m-49 285h0"/><path stroke="#7ca7bf" stroke-width="6.6" d="M0 0m464 268h0m0 16h0m1-4h0m88 1h0m-89 13h0m70 26h0m-53 31h0m-14 6h0m-2 3h0m10 1h0m-17 12h0m2 2h0m93-3h0m-53 51h0m-92 108h0m42 85h0m-17 83h0m-13 15h0m-36 37h0m32 2h0m-23 7h0m27 12h0m-29 6h0m-53 207h0m-36 96h0"/><path stroke="#7ca7bf" stroke-width="7.6" d="M0 0m465 264h0m31 105h0"/><path stroke="#91bccc" stroke-width="6.6" d="M0 0m397 413h0m86 8h0m-59 87h0m-35 40h0m-9 10h0m23-1h0m21 36h0m-61 30h0m9-2h0m13 14h0m20 12h0m-18 10h0m37 3h0m-21 15h0m-33 6h0m-5 9h0m53 11h0m-55 17h0m17 26h0m7 102h0m-26 57h0m-12 42h0m2 10h0m-51 91h0m-33 5h0"/><path stroke="#c4e1e5" stroke-width="6.6" d="M0 0m389 336h0m4 173h0m10-4h0m-33 36h0m-7 27h0m0 23h0m9-4h0m4 98h0m-32 123h0m-4 93h0m-12 20h0m-15 11h0m-4 8h0m-9 25h0m-21 53h0m-2 9h0m23 13h0m-73 90h0"/><path stroke="#6a92b0" stroke-width="6.6" d="M0 0m496 265h0m-32 34h0m102 2h0m71 0h0m-170 18h0m151 21h0m-143 15h0m61 43h0m-44 2h0m-21 56h0m4 40h0m9 115h0m-70 33h0m29 58h0m-21 25h0m-31 2h0m36 45h0m12 24h0m6 2h0m-18 33h0m-78 137h0m-19 55h0"/><path stroke="#6a92b0" stroke-width="7.6" d="M0 0m568 388h0m-85 19h0m-16 107h0m-49 222h0m-4 113h0m-74 141h0"/><path stroke="#a9cfd9" stroke-width="6.6" d="M0 0m435 466h0m-25 9h0m-32 7h0m25 5h0m5 19h0m-11 22h0m-8 71h0m-23 70h0m-22 184h0m5 54h0m-5 10h0m-23 28h0m2 9h0m-35 62h0m8 37h0m-4 4h0m-26 16h0m-48 72h0"/><path stroke="#7ca7bf" stroke-width="6.6" d="M0 0m585 273h0m-9 13h0m-116 8h0m101 49h0m38-2h0m-33 4h0m-93 11h0m84 1h0m-88 44h0m8 111h0m-19 18h0m-10 10h0m33 34h0m-90 47h0m59 15h0m-38 42h0m61 9h0m-72 12h0m15 19h0m-31 5h0m-13 25h0m34 3h0m-17 22h0m-26 70h0m-19 111h0"/><path stroke="#7ca7bf" stroke-width="7.6" d="M0 0m532 274h0m-49 121h0m-25 203h0m-23 85h0m-72 72h0m19 2h0m-19 162h0"/><path stroke="#a9cfd9" stroke-width="7.6" d="M0 0m349 900h0"/><path stroke="#c4e1e5" stroke-width="6.6" d="M0 0m384 514h0m-19 8h0m-18 305h0m4 81h0m-45 23h0m1 1h0m12 2h0m-13 11h0m-18 62h0"/><path stroke="#3b4d73" stroke-width="6.6" d="M0 0m578 673h0m-19 86h0m-33 12h0m-66 12h0m-2 22h0m0 17h0m-29 104h0m-28 71h0m53 26h0m-51 13h0m-21 19h0m13-5h0m-32 18h0m9-1h0m8 5h0m-15 22h0m-4 22h0m-80 23h0"/><path stroke="#597b9f" stroke-width="6.6" d="M0 0m538 271h0m32-7h0m8 31h0m-19 3h0m21 4h0m-8 21h0m-6 21h0m23 14h0m-95 2h0m48 7h0m21 23h0m-105 17h0m103-4h0m21 18h0m-117 9h0m113-2h0m25 0h0m-40 10h0m17-3h0m-116 18h0m1 9h0m2-5h0m23 22h0m-21 26h0m15-1h0m27 47h0m-53 13h0m11 15h0m21 12h0m0 21h0m-13 21h0m-13 29h0m1 90h0m-5 41h0m-21 22h0m0 5h0m-21 16h0m-6 13h0m34 15h0m-97 145h0m-21 17h0m29 41h0m-19 33h0m-40 12h0"/><path stroke="#49648a" stroke-width="6.6" d="M0 0m610 278h0m-40 6h0m65 10h0m6-4h0m-69 18h0m2-4h0m-4 24h0m61 15h0m-51 5h0m-16 12h0m-3 28h0m89-4h0m-97 9h0m21 12h0m36 30h0m-13 9h0m-25 5h0m12 4h0m-2 5h0m2 37h0m72-5h0m-99 18h0m17-2h0m6 3h0m13 1h0m21 1h0m-141 4h0m74 6h0m12 0h0m4 21h0m13-3h0m36 0h0m-25 16h0m-30 25h0m-2 26h0m103-1h0m-69 8h0m12-2h0m-6 10h0m-38 16h0m-63 5h0m-2 22h0m4 4h0m9 18h0m-26 6h0m78 5h0m-99 17h0m122 15h0m-120 18h0m9 15h0m27 12h0m-71 168h0m2 1h0m10-7h0m-12 24h0m-9 15h0m15 8h0m-51 20h0m5 28h0m-11 10h0m-19 19h0m-6 26h0m-26 18h0m24 6h0m-3 2h0m-54 14h0m14-4h0"/><path stroke="#6a92b0" stroke-width="7.6" d="M0 0m555 297h0m11 28h0m-108 257h0m-36 248h0m7-6h0"/><path stroke="#91bccc" stroke-width="6.6" d="M0 0m465 368h0m-59 195h0m-21 104h0m18 29h0m-40 24h0m22 19h0m56 36h0m-97 95h0m1 41h0m4 30h0"/><path stroke="#91bccc" stroke-width="7.6" d="M0 0m353 963h0"/><path stroke="#c4e1e5" stroke-width="7.6" d="M0 0m279 1027h0"/><path stroke="#597b9f" stroke-width="7.6" d="M0 0m553 325h0m23 56h0m-118 76h0m46 65h0m-46 22h0m72 42h0m-49 56h0m11 10h0m-61 86h0m-40 109h0m-57 206h0"/><path stroke="#6a92b0" stroke-width="6.6" d="M0 0m587 265h0m2 20h0m2 1h0m-21 33h0m10 2h0m-88 12h0m6-4h0m55 37h0m0-4h0m67 3h0m-42 31h0m-82 10h0m-38 6h0m23-3h0m-14 14h0m29 42h0m-21 8h0m11 52h0m-7 17h0m-21 30h0m-17 40h0m13 57h0m-32 35h0m-25 60h0m57 47h0m-32 16h0m-37 20h0m35 43h0m-67 60h0m4 50h0m2 11h0"/><path stroke="#49648a" stroke-width="7.6" d="M0 0m572 295h0m10 86h0m-124 35h0m110 31h0m-154 446h0m-15 141h0"/><path stroke="#a9cfd9" stroke-width="6.6" d="M0 0m416 502h0m-36 32h0m21 0h0m-10 3h0m-15 79h0m-4 8h0m-7 14h0m9-1h0m2 24h0m-11 60h0m-21 198h0m-38 8h0m38-6h0m5 1h0m-43 21h0m9 16h0m-17 76h0m-72 99h0"/><path stroke="#3b4d73" stroke-width="7.6" d="M0 0m591 732h0m-131 166h0m-71 132h0"/><path stroke="#91bccc" stroke-width="7.6" d="M0 0m568 352h0m-167 298h0m-56 271h0"/><path stroke="#91bccc" stroke-width="6.6" d="M0 0m477 276h0m19 45h0m-17 107h0m-80 171h0m6 0h0m-20 9h0m10 7h0m-2 13h0m31 2h0m-29 7h0m6 11h0m-25 21h0m-13 9h0m22 46h0m-22 26h0m-19 181h0m-10 63h0m-68 70h0"/><path stroke="#49648a" stroke-width="7.6" d="M0 0m576 300h0m-23 7h0m97 32h0m-32 11h0m-55 59h0m24 75h0m-30 69h0m-4 17h0m-145 392h0"/><path stroke="#597b9f" stroke-width="6.6" d="M0 0m486 270h0m132 2h0m-23 10h0m-126 15h0m95 10h0m23 0h0m-91 19h0m137 15h0m-34 26h0m-33 18h0m-62 12h0m20-5h0m29 6h0m-82 20h0m151 10h0m-56 19h0m54 15h0m-137 6h0m127-4h0m-57 12h0m-82 21h0m-2 13h0m27 1h0m-29 31h0m4 1h0m-6 14h0m92 6h0m-73 115h0m-26 8h0m-38 115h0m-25 16h0m42 25h0m-19 8h0m25 4h0m-107 208h0"/><path stroke="#c4e1e5" stroke-width="6.6" d="M0 0m385 603h0m-22 93h0m-19 131h0m-23 88h0m4 13h0m28 13h0m-47 6h0m-25 80h0m-44 81h0m-4 11h0m-11 21h0"/><path stroke="#49648a" stroke-width="6.6" d="M0 0m568 267h0m21 12h0m27 8h0m-50 2h0m19 81h0m2 14h0m-32 18h0m61 7h0m-63 10h0m17-1h0m36 3h0m25 16h0m-15 8h0m-109 32h0m46 1h0m15-4h0m17 4h0m31 1h0m-44 6h0m15 2h0m-32 8h0m19-3h0m-17 10h0m11 13h0m27 23h0m-131 12h0m133 4h0m-23 9h0m-101 18h0m80-5h0m25 8h0m30 6h0m-55 13h0m11 1h0m-80 12h0m-11 15h0m80-6h0m-88 9h0m10 36h0m21-6h0m27 1h0m-54 36h0m-9 41h0m5 13h0m-57 6h0m31 102h0m-6 2h0m-2 57h0m-21 16h0m31 12h0m-14 2h0m-40 49h0m-21 42h0m10 9h0m-6 6h0m-34 12h0m6 9h0m7-1h0m4-1h0m-65 51h0"/><path stroke="#c4e1e5" stroke-width="7.6" d="M0 0m273 1021h0m-28 76h0"/><path stroke="#3b4d73" stroke-width="7.6" d="M0 0m496 820h0m-38 29h0"/><path stroke="#7ca7bf" stroke-width="6.6" d="M0 0m580 273h0m2 4h0m-120 5h0m15 4h0m-19 3h0m2 3h0m131 3h0m55 22h0m-186 40h0m36 5h0m-17 28h0m101 13h0m-105 11h0m0 9h0m11 35h0m-5 12h0m-10 4h0m10 12h0m-23 66h0m-15 60h0m-35 39h0m-17 14h0m19 27h0m8 15h0m32 31h0m-44 19h0m-21 3h0m71 73h0m-99 147h0m-21 52h0"/><path stroke="#a9cfd9" stroke-width="6.6" d="M0 0m401 454h0m-21 21h0m30 70h0m-28 19h0m-19 35h0m57 2h0m-17 11h0m-29 49h0m-4 10h0m0 13h0m4 13h0m10 26h0m-40 165h0m-38 33h0m0 11h0m0 26h0m22 17h0m-36 65h0m12 9h0m-73 72h0"/><path stroke="#6a92b0" stroke-width="6.6" d="M0 0m578 269h0m0 23h0m-113 4h0m-7 14h0m120-3h0m23-2h0m-29 8h0m12 6h0m-113 18h0m130 13h0m-139 18h0m40 4h0m-29 10h0m-6 17h0m14 2h0m-8 46h0m-4 22h0m21 23h0m-23 28h0m-2 15h0m12 4h0m-10 40h0m16 53h0m-61 46h0m11 0h0m-70 40h0m34 9h0m11 12h0m17 18h0m-34 11h0m-2 14h0m6 41h0m55 23h0"/><path stroke="#3b4d73" stroke-width="6.6" d="M0 0m555 732h0m29 30h0m-29 24h0m-76 85h0m-8 19h0m-82 123h0m-7 29h0m3-2h0m63 21h0m-57 3h0m-6 10h0m-22 7h0m-18 34h0m-24 9h0"/><path stroke="#597b9f" stroke-width="7.6" d="M0 0m572 299h0m61 16h0m-13 45h0m-40 30h0m-21 46h0m-103 345h0m-34 47h0m2 106h0"/><path stroke="#6a92b0" stroke-width="7.6" d="M0 0m599 308h0m-107 8h0m-17 139h0m-88 395h0"/><path stroke="#a9cfd9" stroke-width="7.6" d="M0 0m365 602h0m-14 268h0m-6 3h0"/><path stroke="#7ca7bf" stroke-width="7.6" d="M0 0m465 336h0m10 148h0m-27 170h0m-68 55h0m38 92h0"/><path stroke="#49648a" stroke-width="6.6" d="M0 0m585 277h0m71-1h0m-50 7h0m-43 28h0m19 13h0m19-1h0m-2 14h0m42 9h0m-63 16h0m30-1h0m-55 26h0m42 4h0m-31 27h0m-11 9h0m0 12h0m25 19h0m-2 8h0m-2 16h0m-13 10h0m19 19h0m5 2h0m-114 13h0m86 4h0m25 5h0m26-7h0m-84 42h0m-26 20h0m-29 4h0m84 13h0m-88 8h0m19-3h0m75 6h0m-88 9h0m0 11h0m29 1h0m-36 46h0m9 20h0m-13 13h0m2 13h0m3 2h0m-7 4h0m7 9h0m-7 13h0m11-4h0m-51 71h0m30 13h0m-23 6h0m-5 28h0m9 25h0m-21 35h0m17-3h0m-36 28h0m36-4h0m-3 14h0m-12 13h0m-19 19h0m31 4h0m-27 16h0m0 31h0m-27 15h0m-34 12h0m15-1h0m-24 25h0m-2 9h0m7-4h0m14 0h0"/><path stroke="#3b4d73" stroke-width="7.6" d="M0 0m382 1078h0m-14 6h0"/><path stroke="#91bccc" stroke-width="6.6" d="M0 0m462 277h0m9 21h0m-13 40h0m0 68h0m-92 197h0m4 26h0m19 31h0m-15 19h0m19 4h0m-25 15h0m6 8h0m72 10h0m-62 19h0m-10 17h0m-57 207h0m13 46h0m-2 22h0m-28 18h0"/><path stroke="#7ca7bf" stroke-width="7.6" d="M0 0m460 281h0m93 17h0m19 177h0m-160 172h0"/><path stroke="#597b9f" stroke-width="7.6" d="M0 0m561 312h0m-69 34h0m21 93h0m84 164h0m-126 9h0m-19 209h0m-13 81h0"/><path stroke="#a9cfd9" stroke-width="6.6" d="M0 0m399 393h0m-4 107h0m4 36h0m-10 31h0m2 2h0m-4 104h0m-17 81h0m-25 113h0m-41 126h0m-25 29h0m7 17h0m-30 21h0m34-3h0"/><path stroke="#c4e1e5" stroke-width="7.6" d="M0 0m306 920h0m13 19h0"/><path stroke="#c4e1e5" stroke-width="6.6" d="M0 0m368 568h0m-38 319h0m14 27h0m-27 20h0m-27 52h0m-4 52h0m-62 98h0m-8 14h0"/><path stroke="#3b4d73" stroke-width="6.6" d="M0 0m553 636h0m4 55h0m17 68h0m-59 16h0m-42 18h0m135 2h0m-2 44h0m-148 23h0m15 7h0m50 1h0m-143 187h0m-10 29h0m-45 30h0m-19 14h0m41 4h0m-91 7h0"/><path stroke="#a9cfd9" stroke-width="7.6" d="M0 0m363 673h0"/><path stroke="#6a92b0" stroke-width="6.6" d="M0 0m462 267h0m42 10h0m38 27h0m24 31h0m-102 3h0m9 3h0m63-2h0m-63 5h0m109 8h0m-58 38h0m-13 4h0m-32 8h0m4 10h0m9-4h0m-34 8h0m38 20h0m0 2h0m-25 23h0m34 2h0m-9 4h0m-32 33h0m1 108h0m44 47h0m-118 99h0m-23 37h0m46 25h0m32 10h0m-5 27h0m-19 61h0m-73 83h0m-17 23h0"/><path stroke="#49648a" stroke-width="7.6" d="M0 0m572 460h0m17 15h0m-131 83h0m25 154h0m-18 104h0m-43 153h0"/><path stroke="#91bccc" stroke-width="7.6" d="M0 0m458 265h0m17 3h0m30 66h0m-161 532h0"/><path stroke="#597b9f" stroke-width="6.6" d="M0 0m589 271h0m12 20h0m-48 12h0m10 11h0m114 10h0m-118 7h0m25 2h0m-16 8h0m-106 4h0m133 5h0m-19 4h0m0 2h0m-65 12h0m69 5h0m-23 17h0m-99 6h0m0 6h0m26 30h0m82 26h0m-95 34h0m84-2h0m-25 22h0m42 3h0m8 13h0m-94 26h0m65 2h0m-55 7h0m-27 57h0m-4 17h0m35-4h0m47 0h0m-68 25h0m-99 82h0m57 38h0m4 34h0m-33 4h0m33 12h0m-8 22h0m-4 6h0m-2 13h0m-34 65h0m-38 96h0m0 24h0m0 14h0m-129 93h0"/><path stroke="#6a92b0" stroke-width="7.6" d="M0 0m458 426h0m4 131h0"/><path stroke="#7ca7bf" stroke-width="6.6" d="M0 0m574 276h0m-116 10h0m97 10h0m30 7h0m-121 13h0m1 11h0m59-4h0m29 2h0m-23 23h0m-65 68h0m-7 8h0m38 5h0m-6 22h0m-15 95h0m-36 70h0m-54 32h0m23 23h0m42-4h0m-59 12h0m23-1h0m-46 10h0m33 3h0m49 12h0m-57 2h0m6 6h0m-29 14h0m15 11h0m10 13h0m44 11h0m-21 48h0m-59 145h0m-8 64h0"/><path stroke="#91bccc" stroke-width="7.6" d="M0 0m294 1039h0"/><path stroke="#6a92b0" stroke-width="7.6" d="M0 0m458 271h0m141-4h0m-204 557h0"/><path stroke="#7ca7bf" stroke-width="6.6" d="M0 0m465 308h0m0 13h0m10 13h0m78 25h0m31 6h0m-73 11h0m-30 25h0m-6 9h0m25 55h0m-27 44h0m-63 156h0m-42 39h0m2 13h0m46 2h0m-19 10h0m15 6h0m-25 24h0m8 3h0m19 19h0m-27 5h0m-7 24h0m-31 157h0m-21 43h0m8-1h0m-2 8h0m-2 15h0"/><path stroke="#49648a" stroke-width="7.6" d="M0 0m574 389h0m-4 20h0m31 175h0m-29 10h0m-143 229h0m-55 217h0"/><path stroke="#c4e1e5" stroke-width="6.6" d="M0 0m368 415h0m40 52h0m-43 60h0m36-1h0m-36 56h0m13 17h0m-13 57h0m0 15h0m-21 181h0m0 48h0m3 8h0m-30 4h0m-10 15h0m0-3h0m16 6h0m-38 81h0m-2 6h0m5 3h0m-36 57h0"/><path stroke="#a9cfd9" stroke-width="6.6" d="M0 0m458 298h0m-88 214h0m27 1h0m-6 30h0m-26 27h0m0 34h0m0 29h0m20 47h0m-11 79h0m-30 88h0m0 27h0m-2 59h0m3 3h0m-34 21h0m6 33h0m-25 33h0m-15 7h0m-59 121h0"/><path stroke="#c4e1e5" stroke-width="7.6" d="M0 0m269 1030h0"/><path stroke="#91bccc" stroke-width="6.6" d="M0 0m401 605h0m-8 28h0m0 5h0m48 0h0m-10 78h0m-66 26h0m9-6h0m0 5h0m-30 156h0m-10 37h0m-4 46h0m-2 10h0"/><path stroke="#49648a" stroke-width="6.6" d="M0 0m593 321h0m8 11h0m21 3h0m-19 6h0m-29 44h0m55 3h0m-74 11h0m53 11h0m-49 40h0m-63 27h0m4 0h0m74 2h0m-15 9h0m-80 15h0m91-7h0m19 4h0m19 31h0m-28 12h0m-27 8h0m17 0h0m-106 10h0m91 1h0m49 2h0m-100 17h0m70 4h0m2 4h0m-84 16h0m67-2h0m-76 15h0m74 8h0m-90 45h0m12 39h0m19-1h0m15 3h0m-51 8h0m36 23h0m-4 18h0m-29 13h0m0 15h0m-57 30h0m-21 22h0m46 43h0m-2 7h0m4 18h0m-44 42h0m34 15h0m-36 24h0m33-6h0m-25 12h0m17 19h0m-36 1h0m25 8h0m-29 15h0m-15 9h0m-4 15h0m2 7h0m-32 43h0m-39 15h0"/><path stroke="#597b9f" stroke-width="6.6" d="M0 0m553 264h0m23 7h0m-23 2h0m25 19h0m57-4h0m-8 8h0m-43 39h0m3 14h0m-19 8h0m-13 12h0m46 0h0m2 9h0m-27 13h0m-17 43h0m-86 8h0m46 0h0m66 2h0m-110 10h0m-11 7h0m40 3h0m106 41h0m-137 17h0m23 17h0m131-3h0m-160 22h0m94-6h0m-82 51h0m-15 35h0m1-3h0m-7 22h0m4 24h0m13 8h0m0 10h0m15 47h0m-49 56h0m-29 43h0m6 31h0m28 1h0m-51 4h0m19 7h0m-25 44h0m0 64h0m-91 81h0m-4 36h0"/><path stroke="#7ca7bf" stroke-width="7.6" d="M0 0m408 677h0m8-5h0m0 41h0m-53 43h0m22 20h0"/><path stroke="#a9cfd9" stroke-width="7.6" d="M0 0m374 473h0m23 199h0m-82 278h0"/><path stroke="#3b4d73" stroke-width="6.6" d="M0 0m643 427h0m-90 148h0m15 111h0m25 25h0m-40 12h0m8 34h0m-8 82h0m-91 67h0m-19 75h0m-44 47h0m-15 20h0m22 2h0m0 8h0m-62 61h0m-18 6h0m-28 8h0m-31 12h0"/><path stroke="#6a92b0" stroke-width="6.6" d="M0 0m462 268h0m93-4h0m59 42h0m-30 13h0m22 39h0m-146 13h0m2 8h0m-4 16h0m17 4h0m21 1h0m-15 46h0m106 4h0m-106 7h0m-16 7h0m18 21h0m7 54h0m-23 22h0m29 5h0m-29 26h0m-2 65h0m-57 36h0m-24 39h0m51-1h0m-17 9h0m-12 8h0m33 25h0m-31 10h0m-45 23h0m11 0h0m17-2h0m57-3h0m-9 26h0m-8 22h0m-11 8h0m17 47h0m-227 267h0"/><path stroke="#597b9f" stroke-width="7.6" d="M0 0m582 312h0m-10 98h0m-114 77h0m17 52h0m126 20h0m-128 2h0m-4 157h0m-32 85h0m17 60h0"/><path stroke="#597b9f" stroke-width="7.6" d="M0 0m553 388h0m8 24h0m-73 48h0m-30 145h0m-67 145h0m4 93h0m17 69h0m-55 118h0"/><path stroke="#3b4d73" stroke-width="7.6" d="M0 0m572 773h0m-251 351h0m-54 19h0"/><path stroke="#c4e1e5" stroke-width="6.6" d="M0 0m401 404h0m0 49h0m-35 108h0m0 65h0m42 64h0m-61 172h0m-3 29h0m-14 14h0m-9 39h0m-8 17h0m12 0h0m-39 52h0m-11 21h0m4-2h0m-10 8h0m-15 38h0m-6 8h0m14-5h0m-25 30h0"/><path stroke="#a9cfd9" stroke-width="6.6" d="M0 0m401 361h0m-25 68h0m23-5h0m-12 101h0m14 11h0m-21 20h0m0 196h0m-36 66h0m-12 140h0m2 5h0m-36 55h0m-10 35h0m6-5h0m-74 98h0"/><path stroke="#7ca7bf" stroke-width="6.6" d="M0 0m559 264h0m2 10h0m-103 131h0m6 7h0m1 81h0m2 52h0m-11 100h0m-13 30h0m-42 25h0m13 4h0m-25 15h0m33 0h0m-59 11h0m40 4h0m-8 34h0m23 5h0m25 0h0m-35 12h0m-64 166h0m-40 75h0m47 1h0m-49 19h0"/><path stroke="#a9cfd9" stroke-width="7.6" d="M0 0m296 1028h0"/><path stroke="#49648a" stroke-width="7.6" d="M0 0m553 417h0m19 127h0m-13 21h0m-38 91h0m-52 52h0m-55 225h0m-25 49h0m-36 68h0m-105 96h0"/><path stroke="#49648a" stroke-width="6.6" d="M0 0m564 279h0m2 17h0m67 36h0m-53 26h0m-10 4h0m101 19h0m-95 11h0m91 0h0m-101 14h0m-3 7h0m36 4h0m5 6h0m20 0h0m-40 5h0m19 6h0m19 6h0m-2 26h0m-56 24h0m46 4h0m53 2h0m-108 11h0m-80 8h0m97 6h0m-8 10h0m6-3h0m-93 23h0m108-6h0m-89 7h0m57 3h0m2 17h0m9 3h0m-95 14h0m6-2h0m-6 12h0m27-4h0m61 0h0m7 39h0m-106 37h0m46 17h0m-39 27h0m0 9h0m-7 58h0m-13 32h0m-31 13h0m17 55h0m2 6h0m-15 9h0m15 6h0m-19 7h0m8 7h0m-14 4h0m14 14h0m-10 33h0m6 9h0m-19 14h0m-15 7h0m0 15h0m15 0h0m-31 16h0m-38 62h0m-4 12h0"/><path stroke="#3b4d73" stroke-width="6.6" d="M0 0m553 710h0m8 0h0m-4 45h0m2-3h0m-99 121h0m7 44h0m-3 28h0m-61 62h0m5 0h0m0 7h0m-32 9h0m-4 23h0m-7 15h0m43 4h0m4 3h0m-13 12h0m-74 39h0m5-3h0m-2 8h0m-57 17h0m-19 11h0"/><path stroke="#91bccc" stroke-width="6.6" d="M0 0m458 270h0m2 5h0m9 3h0m-9 2h0m-2 84h0m-90 164h0m-3 63h0m11 79h0m25 4h0m11 3h0m-46 24h0m2-5h0m19 8h0m-22 10h0m57 30h0m-38 34h0m-39 117h0m16 20h0"/><path stroke="#6a92b0" stroke-width="7.6" d="M0 0m559 267h0m-67 36h0m-25 51h0m29 29h0m-38 60h0m6 13h0"/><path stroke="#7ca7bf" stroke-width="7.6" d="M0 0m654 284h0m-164 34h0m170 33h0m-257 298h0m19 44h0m-48 79h0"/><path stroke="#6a92b0" stroke-width="6.6" d="M0 0m563 268h0m-101 7h0m123 0h0m-80 5h0m-45 17h0m103-1h0m-96 14h0m103 9h0m10-7h0m-122 11h0m101 15h0m72 39h0m-167 28h0m32 18h0m-25 16h0m-6 34h0m16 36h0m7 64h0m-30 18h0m-53 136h0m1 39h0m21 17h0m-5 16h0m-10 27h0m34 10h0m-28 20h0m-34 32h0m-84 197h0"/><path stroke="#91bccc" stroke-width="7.6" d="M0 0m469 386h0"/><path stroke="#597b9f" stroke-width="6.6" d="M0 0m671 275h0m-118 14h0m36 21h0m-36 8h0m-89 7h0m123 2h0m-116 26h0m82 2h0m19 7h0m-105 36h0m97-5h0m-93 45h0m82 9h0m17 14h0m-74 23h0m57 23h0m-89 25h0m93 1h0m-67 15h0m6 7h0m-32 8h0m5 0h0m27 9h0m-29 6h0m-9 84h0m32 12h0m-51 54h0m0 42h0m-14 57h0m-17 5h0m21 34h0m-2 21h0m-19 33h0m-15 29h0m-6 27h0m-49 77h0m-42 69h0m-74 42h0m7-4h0"/><path stroke="#c4e1e5" stroke-width="7.6" d="M0 0m239 1112h0"/><path stroke="#91bccc" stroke-width="7.6" d="M0 0m401 559h0m-23 136h0m11 34h0m19 20h0m-61 188h0m-22 44h0"/><path stroke="#3b4d73" stroke-width="7.6" d="M0 0m458 913h0m-63 101h0m-110 120h0"/><path stroke="#49648a" stroke-width="6.6" d="M0 0m584 284h0m41 10h0m2 14h0m21 3h0m-57 44h0m-38 37h0m19 2h0m-19 14h0m13 11h0m-9 18h0m2 2h0m11 3h0m-7 36h0m-90 9h0m82-1h0m59 2h0m-59 19h0m25 3h0m-25 7h0m4 6h0m15 1h0m-8 4h0m23 9h0m-93 16h0m-38 13h0m25 3h0m89 6h0m-19 8h0m34 2h0m-32 7h0m-2 17h0m-74 10h0m78 6h0m-2 11h0m-86 24h0m15 12h0m-7 27h0m-15 12h0m-2 30h0m21 46h0m-35 53h0m-19 22h0m6 10h0m17 30h0m-30 2h0m9 2h0m4-1h0m-44 12h0m16 26h0m26-7h0m4 23h0m-21 1h0m-36 33h0m9 3h0m0 3h0m21-6h0m-32 10h0m6 15h0m-19 13h0m-29 72h0m-6 4h0m16 3h0"/><path stroke="#6a92b0" stroke-width="6.6" d="M0 0m460 306h0m2 8h0m0 115h0m2-4h0m5 26h0m27 4h0m82 75h0m-113 11h0m-7 40h0m7 22h0m-64 33h0m21 21h0m30 23h0m-21 44h0m19 9h0m-26 7h0m43 1h0m-80 15h0m-3 11h0m3 0h0m-2 5h0m8 8h0m34 7h0m-32 11h0m-8 3h0m10 14h0m-34 30h0m0 1h0m28 1h0m15 8h0m4 1h0m-55 161h0"/><path stroke="#597b9f" stroke-width="7.6" d="M0 0m458 334h0m13 145h0m-9 184h0m-12 141h0m-207 348h0"/><path stroke="#597b9f" stroke-width="6.6" d="M0 0m622 271h0m-124 61h0m87 4h0m-30 30h0m21 30h0m-109 44h0m139 20h0m-102 25h0m-31 6h0m23 18h0m-19 9h0m-15 13h0m21 7h0m-10 18h0m19 32h0m-13 7h0m-15 20h0m7 1h0m2 1h0m10 4h0m-35 57h0m12 2h0m4 44h0m-61 62h0m22 7h0m-9 29h0m0 21h0m2-1h0m28 48h0m-34 19h0m-23 20h0m-59 82h0m29 80h0m-71 33h0"/><path stroke="#49648a" stroke-width="7.6" d="M0 0m578 443h0m-25 26h0m2 6h0m-86 54h0m84 9h0m-95 86h0m0 44h0m-13 193h0m-20 19h0m-38 48h0m19 9h0"/><path stroke="#6a92b0" stroke-width="7.6" d="M0 0m462 298h0m32 166h0m-29 164h0m-123 407h0"/><path stroke="#a9cfd9" stroke-width="7.6" d="M0 0m313 952h0"/><path stroke="#a9cfd9" stroke-width="6.6" d="M0 0m408 527h0m-19 36h0m16 54h0m-42 83h0m5 8h0m-15 164h0m-8 14h0m-32 50h0m13 38h0m10-5h0m-38 57h0m-31 18h0m0 4h0m-7 14h0m-21 43h0"/><path stroke="#c4e1e5" stroke-width="6.6" d="M0 0m420 510h0m-57 31h0m32 7h0m-29 29h0m-21 170h0m-38 191h0m-11 94h0m-36 42h0"/><path stroke="#3b4d73" stroke-width="6.6" d="M0 0m553 724h0m2 38h0m17-1h0m8 0h0m-97 37h0m-23 23h0m47 21h0m-32 11h0m21-2h0m-21 54h0m-17 36h0m11 17h0m-57 44h0m-11 36h0m-31 4h0m10 0h0m25 3h0m-39 22h0m2 14h0m-24 29h0m3 13h0m-47 9h0"/><path stroke="#7ca7bf" stroke-width="7.6" d="M0 0m460 399h0m-67 302h0m-28 47h0m15 28h0m26 12h0m-22 56h0"/><path stroke="#91bccc" stroke-width="6.6" d="M0 0m490 299h0m-70 229h0m-10 64h0m12 8h0m-59 27h0m40-1h0m-38 14h0m-2 41h0m32 6h0m-29 28h0m-1 24h0m15 17h0m19 8h0m-36 25h0m3 14h0m-49 161h0m8 0h0m7 18h0m-7 18h0m-33 42h0"/><path stroke="#7ca7bf" stroke-width="6.6" d="M0 0m458 267h0m120-3h0m-25 49h0m-95 16h0m0 5h0m0 115h0m0 14h0m-25 162h0m-30 56h0m-31 24h0m61 6h0m-32 12h0m4 3h0m-10 28h0m8-2h0m11 8h0m-19 9h0m4 11h0m9 9h0m-45 31h0m49 1h0m15 25h0m-70 145h0m2-4h0m-21 23h0m-10 20h0m-36 20h0"/><path stroke="#c4e1e5" stroke-width="7.6" d="M0 0m363 645h0"/><path stroke="#c4e1e5" stroke-width="7.6" d="M0 0m277 1037h0"/><path stroke="#6a92b0" stroke-width="7.6" d="M0 0m553 275h0m0 3h0m-95 71h0m0 8h0m-44 452h0m-23 76h0"/><path stroke="#7ca7bf" stroke-width="6.6" d="M0 0m557 274h0m-99 58h0m95 11h0m19 14h0m-46 28h0m-30 53h0m15 8h0m10 70h0m-107 109h0m17 90h0m-23 6h0m-45 88h0m28 16h0m-2 31h0m-26 45h0m-25 90h0m15 11h0"/><path stroke="#3b4d73" stroke-width="7.6" d="M0 0m610 754h0m-87 88h0"/><path stroke="#597b9f" stroke-width="6.6" d="M0 0m481 282h0m80 20h0m53-5h0m-61 14h0m0 10h0m46-1h0m-46 28h0m31 8h0m-31 4h0m19 22h0m-114 9h0m99-5h0m19 25h0m15 3h0m2 0h0m-40 4h0m-91 42h0m61 35h0m34 46h0m-65 3h0m-32 12h0m28-4h0m-30 20h0m26 2h0m-20 52h0m-4 31h0m2 3h0m0 39h0m-2 13h0m-52 67h0m23 28h0m6-3h0m-27 40h0m42 3h0m-89 3h0m61 2h0m1 6h0m-15 8h0m-7 18h0m19 5h0m-10 60h0m-17 7h0m-34 59h0m-8 46h0m-120 94h0"/><path stroke="#597b9f" stroke-width="7.6" d="M0 0m564 290h0m-102 20h0m97-1h0m-101 307h0m-52 220h0"/><path stroke="#3b4d73" stroke-width="6.6" d="M0 0m559 681h0m-44 31h0m103 73h0m-149 78h0m10 10h0m-17 10h0m5 1h0m-82 169h0m-22 12h0m-27 52h0m-25 7h0m-44 17h0m-28 14h0m-12 5h0"/><path stroke="#c4e1e5" stroke-width="6.6" d="M0 0m429 311h0m-45 378h0m-67 219h0m28-2h0m-38 22h0m8 37h0m-29 58h0m8 7h0m-8 5h0m-45 61h0m4 0h0m-21 43h0"/><path stroke="#6a92b0" stroke-width="6.6" d="M0 0m553 266h0m21 5h0m-10 10h0m37 0h0m-8 12h0m-34 26h0m13 23h0m-15 12h0m-2 17h0m84 6h0m-172 42h0m-5 9h0m-4 22h0m23 7h0m0 48h0m-21 28h0m-52 166h0m2 10h0m21-3h0m-19 51h0m-34 7h0m11 6h0m31 6h0m-12 22h0m12-2h0m2 18h0m0 22h0m-27 8h0m2 109h0m-48 39h0m4 16h0m-23 24h0m8 12h0m17 13h0"/><path stroke="#91bccc" stroke-width="6.6" d="M0 0m387 406h0m-24 166h0m30 53h0m-30 47h0m22 24h0m-5 19h0m-14 5h0m2 50h0m-5 10h0m19 6h0m21-1h0m-73 175h0m-11 28h0m9 16h0m-32 62h0"/><path stroke="#a9cfd9" stroke-width="7.6" d="M0 0m458 383h0"/><path stroke="#91bccc" stroke-width="7.6" d="M0 0m363 765h0m0 27h0m-18 118h0m-119 226h0"/><path stroke="#49648a" stroke-width="6.6" d="M0 0m555 267h0m23 17h0m-19 52h0m4 12h0m1 4h0m27 19h0m-30 8h0m3 18h0m10-3h0m40 4h0m-55 9h0m15 5h0m6 1h0m38 25h0m21-5h0m-143 13h0m70-3h0m78-2h0m-64 30h0m-2 2h0m-21 17h0m7 0h0m20 2h0m-105 32h0m125 11h0m-51 1h0m27 8h0m-2 27h0m-113 27h0m98-6h0m-101 47h0m3 28h0m0 12h0m98-5h0m-96 26h0m-7 29h0m49 2h0m-49 26h0m0 4h0m5 3h0m18 32h0m7-3h0m-65 37h0m-5 13h0m26 2h0m-21 63h0m-7 29h0m-23 13h0m15-6h0m4 0h0m4 1h0m4 20h0m-19 25h0m3-5h0m-9 13h0m11 6h0m-34 17h0m0-1h0m25 0h0m-23 7h0m4 0h0m-17 22h0m0 13h0m-19 35h0m-33 14h0m-19 7h0m-6 6h0m-24 8h0m28 0h0m0-1h0"/><path stroke="#7ca7bf" stroke-width="7.6" d="M0 0m465 330h0m-64 416h0m-38 70h0m-27 225h0"/><path stroke="#49648a" stroke-width="7.6" d="M0 0m559 350h0m63 43h0m-38 114h0m-2 23h0m-120 110h0m122 103h0m-126 15h0m-40 142h0m2 61h0m-14 11h0m-38 39h0m16-2h0m-50 79h0m-13 22h0"/><path stroke="#a9cfd9" stroke-width="6.6" d="M0 0m363 478h0m28 2h0m8 3h0m2 81h0m-19 105h0m-19 19h0m2 37h0m0 6h0m9 14h0m-32 202h0m-57 94h0m13 0h0m-12 13h0"/><path stroke="#a9cfd9" stroke-width="6.6" d="M0 0m368 463h0m-5 88h0m0 87h0m2-4h0m-21 268h0m-31 26h0m12 13h0m-4 43h0m-36 43h0m-21 42h0m0 12h0"/><path stroke="#6a92b0" stroke-width="6.6" d="M0 0m483 308h0m-8 17h0m116 1h0m44-2h0m-177 36h0m38 0h0m8 8h0m-39 19h0m2 56h0m-9 54h0m0 5h0m0 2h0m51 9h0m-38 42h0m-6 9h0m-1 53h0m-10 78h0m-11 55h0m-63 8h0m2 5h0m-6 24h0m-4 21h0m13 14h0m10-6h0m6 3h0m-19 9h0m7 12h0m19 7h0m6 5h0m8 28h0m-78 61h0m5 18h0m-13 44h0m17 2h0m-15 8h0m0 10h0m2 19h0m-128 128h0"/><path stroke="#91bccc" stroke-width="6.6" d="M0 0m458 305h0m2 30h0m-2 5h0m4 23h0m-23 141h0m-54 94h0m37 7h0m-46 11h0m32 21h0m-45 25h0m57 27h0m-46 10h0m0 68h0m0 22h0m-30 98h0m0 24h0m0 23h0m0 20h0m-14 68h0m-53 25h0m-10 22h0"/><path stroke="#49648a" stroke-width="6.6" d="M0 0m606 264h0m31 4h0m-84 83h0m126 9h0m-193 63h0m92 14h0m-17 29h0m5 11h0m-34 5h0m124 1h0m-101 20h0m4 8h0m17-6h0m-19 8h0m0 10h0m-4 10h0m2 18h0m21-3h0m-4 10h0m-78 9h0m59 7h0m-95 15h0m105 0h0m-35 11h0m-42 26h0m113 23h0m-135 22h0m0 19h0m15 10h0m32 2h0m-51 8h0m9-6h0m27 1h0m61 13h0m-80 17h0m-17 32h0m-38 103h0m-14 15h0m2 1h0m15-2h0m31 8h0m-42 4h0m0 21h0m8 4h0m7 9h0m-15 8h0m0 13h0m-38 14h0m19 18h0m27-6h0m-19 21h0m-27 3h0m0 8h0m-15 11h0m2 5h0m3 0h0m-1 27h0m-37 14h0m-32 59h0m-25 14h0m-26 11h0"/><path stroke="#91bccc" stroke-width="7.6" d="M0 0m481 422h0"/><path stroke="#3b4d73" stroke-width="6.6" d="M0 0m620 631h0m-63 87h0m118 56h0m-217 104h0m23 43h0m-63 52h0m-17 10h0m17 76h0m-53 28h0m-46 24h0m28 5h0m-30 12h0m-80 25h0"/><path stroke="#7ca7bf" stroke-width="7.6" d="M0 0m385 710h0m-15 34h0m42 4h0m-23 6h0m-38 208h0"/><path stroke="#a9cfd9" stroke-width="7.6" d="M0 0m405 452h0m-14 124h0m-66 331h0m0 24h0m-111 228h0"/><path stroke="#6a92b0" stroke-width="7.6" d="M0 0m467 485h0m-80 366h0m-42 144h0"/><path stroke="#597b9f" stroke-width="7.6" d="M0 0m557 278h0m9 33h0m-13 232h0m-141 198h0m4 30h0m-6 186h0m-61 68h0m-13 50h0"/><path stroke="#c4e1e5" stroke-width="6.6" d="M0 0m363 497h0m0 212h0m-57 233h0m9-1h0m-6 12h0m35-1h0m-38 10h0m-35 60h0m4 8h0m-9 24h0m-21 43h0"/><path stroke="#597b9f" stroke-width="6.6" d="M0 0m580 269h0m-27 18h0m82-6h0m-42 24h0m-4 13h0m-32 21h0m7 28h0m-5 10h0m-63 38h0m57-6h0m2 74h0m-48 11h0m78 40h0m-7 17h0m38-7h0m-149 22h0m0 23h0m19 13h0m-28 20h0m0 28h0m19 37h0m-8 6h0m-2 17h0m-45 29h0m38 6h0m-90 7h0m86 0h0m4 24h0m-50 52h0m2 46h0m-27 12h0m25 6h0m-47 74h0m13 2h0m25 20h0m-46 6h0m-6 24h0m6 25h0m-91 85h0"/><path stroke="#49648a" stroke-width="7.6" d="M0 0m555 418h0m-13 32h0m-80 227h0"/><path stroke="#7ca7bf" stroke-width="6.6" d="M0 0m553 265h0m-76 19h0m17 54h0m-32 8h0m-4 7h0m38 7h0m-38 10h0m4 16h0m32 7h0m-36 11h0m15 2h0m-4 2h0m50 18h0m47-2h0m-87 31h0m-86 104h0m12 100h0m-8 12h0m30 3h0m10 2h0m-40 5h0m4 38h0m0 14h0m5 11h0m23 15h0m-55 8h0m-2 7h0m-9 16h0m28-5h0m-28 11h0m53-3h0m-38 33h0m59 26h0m-27 17h0m-66 98h0m-18 28h0m-1 11h0m13 44h0"/><path stroke="#3b4d73" stroke-width="7.6" d="M0 0m599 631h0"/><path stroke="#c4e1e5" stroke-width="7.6" d="M0 0m401 539h0m-76 305h0m19 1h0m-77 213h0"/><path stroke="#c4e1e5" stroke-width="6.6" d="M0 0m422 303h0m-50 309h0m-28 246h0m-71 181h0m10-7h0m-12 16h0m-9 36h0m-16 6h0"/><path stroke="#7ca7bf" stroke-width="7.6" d="M0 0m570 293h0m-74 274h0"/><path stroke="#91bccc" stroke-width="6.6" d="M0 0m467 526h0m-43 5h0m-21 46h0m-38 38h0m0 20h0m20 13h0m18 23h0m-40 31h0m2 3h0m7 8h0m0 17h0m-4 9h0m0-1h0m10 21h0m30 62h0m-83 175h0m-21 48h0"/><path stroke="#91bccc" stroke-width="7.6" d="M0 0m385 590h0m56 39h0m-46 114h0"/><path stroke="#49648a" stroke-width="7.6" d="M0 0m574 454h0m-11 6h0m-2 68h0m45 6h0m-148 32h0m80 7h0m21 26h0m-141 326h0m7 42h0m-60 81h0m-73 65h0"/><path stroke="#597b9f" stroke-width="6.6" d="M0 0m589 268h0m-34 14h0m4 2h0m-76 17h0m70 1h0m8 0h0m-101 12h0m103 6h0m5 27h0m46 5h0m-19 23h0m-131 5h0m-4 35h0m15 20h0m9 26h0m90 13h0m-107 23h0m67 6h0m21-1h0m-4 8h0m-61 31h0m80 5h0m-99 12h0m25 28h0m-17 50h0m-10 18h0m105 5h0m-101 20h0m-13 51h0m-57 24h0m38 19h0m17 2h0m-63 30h0m42 29h0m-57 17h0m40-2h0m-2 16h0m6 0h0m-54 11h0m27 1h0m46-4h0m-27 13h0m13 13h0m-40 38h0m-9 9h0m-27 37h0m-4 49h0m-24 59h0m1 8h0m-24 15h0m-42 16h0m-36 32h0"/><path stroke="#3b4d73" stroke-width="6.6" d="M0 0m553 630h0m0 57h0m17 28h0m-15 55h0m19 75h0m-116 39h0m6 66h0m-39 11h0m-22 43h0m-4 15h0m-25 15h0m15 5h0m-26 58h0m2 3h0m-21 26h0m-35 2h0"/><path stroke="#6a92b0" stroke-width="7.6" d="M0 0m467 530h0m29 43h0"/><path stroke="#7ca7bf" stroke-width="6.6" d="M0 0m462 269h0m91 2h0m-95 7h0m13 46h0m88-3h0m-92 73h0m8 15h0m80 7h0m-63 47h0m-34 4h0m0 22h0m-4 225h0m0 13h0m-61 11h0m2-1h0m-30 9h0m3 13h0m25 24h0m25 7h0m-38 7h0m9-2h0m-9 13h0m-12 8h0m0 41h0m38 32h0m-53 132h0m-19 19h0"/><path stroke="#a9cfd9" stroke-width="6.6" d="M0 0m458 327h0m-92 151h0m-3 127h0m2 30h0m-2 36h0m2 40h0m-2 27h0m-16 98h0m-2 18h0m-22 82h0m0 21h0m3 13h0m4 0h0m-17 16h0m-38 53h0m10-5h0m-8 16h0m9 9h0m-30 20h0"/><path stroke="#597b9f" stroke-width="7.6" d="M0 0m458 369h0m7 40h0m101 14h0m-108 16h0m-76 353h0m5 127h0m56-4h0"/><path stroke="#a9cfd9" stroke-width="7.6" d="M0 0m372 614h0m-28 289h0m-52 148h0"/><path stroke="#3b4d73" stroke-width="7.6" d="M0 0m555 751h0m2 59h0m30 75h0m-280 242h0"/><path stroke="#49648a" stroke-width="6.6" d="M0 0m627 284h0m-23 17h0m-36 46h0m57-2h0m-17 18h0m-49 6h0m49 13h0m-19 67h0m-36 22h0m19-5h0m-59 13h0m42 54h0m21 2h0m21 11h0m-124 17h0m-15 11h0m156 12h0m-120 13h0m-36 11h0m106 5h0m-9 19h0m-86 75h0m-38 128h0m-21 61h0m-2 12h0m-13 8h0m15-6h0m-2 19h0m-2 7h0m31 2h0m-40 10h0m-10 41h0m2-5h0m21 10h0m-13 14h0m4 23h0m-46 15h0m-27 46h0m0 3h0m16 0h0m3 0h0m0 18h0m-110 37h0"/><path stroke="#6a92b0" stroke-width="6.6" d="M0 0m460 264h0m188 7h0m15 0h0m-179 27h0m-26 10h0m110-2h0m-110 7h0m129 19h0m-106 12h0m133 0h0m4 12h0m-63 17h0m-46 48h0m69 48h0m-95 20h0m-25 54h0m0 68h0m0 9h0m7 64h0m-9 16h0m-42 33h0m-49 20h0m68 16h0m-51 14h0m64-5h0m-70 25h0m30 25h0m-17 9h0m27-1h0m-42 23h0m0 14h0m40 12h0m-51 11h0m30 17h0m29 44h0m-96 34h0m4 46h0m19 8h0m-139 124h0"/><path stroke="#91bccc" stroke-width="6.6" d="M0 0m433 635h0m-36 33h0m-32 15h0m36-1h0m-14 7h0m14-1h0m2 78h0m-38 23h0m-21 105h0m-16 52h0m-17 38h0m23 17h0m-28 19h0m22 3h0"/><path stroke="#7ca7bf" stroke-width="7.6" d="M0 0m559 290h0m-99 50h0m4 155h0m-63 154h0"/><path stroke="#a9cfd9" stroke-width="6.6" d="M0 0m378 679h0m21 49h0m-29 21h0m38 22h0m-85 192h0m-17 34h0m-37 37h0m0 21h0m0-4h0m-3 35h0m-23 19h0"/><path stroke="#7ca7bf" stroke-width="6.6" d="M0 0m555 293h0m-82 11h0m-13 13h0m17 5h0m2 23h0m-4 48h0m-6 21h0m0 4h0m-2 29h0m25 10h0m-30 33h0m-2 63h0m5 25h0m-62 82h0m-6 28h0m4 21h0m-25 21h0m-13 32h0m47 1h0m35 0h0m-52 10h0m-13 7h0m34 9h0m11 3h0m-41 14h0m30-1h0m-44 6h0m6 43h0m-10 23h0m19-2h0m-19 5h0m-5 52h0m-14 18h0m-11 65h0m-36 59h0"/><path stroke="#49648a" stroke-width="6.6" d="M0 0m622 317h0m-67 47h0m8 20h0m0 13h0m3 9h0m-11 6h0m99-4h0m-90 14h0m113-5h0m-97 17h0m49-1h0m-68 12h0m-80 41h0m78 8h0m13 22h0m-17 8h0m19-4h0m-19 13h0m-88 6h0m105 2h0m-19 12h0m17 15h0m23 10h0m-40 21h0m-89 7h0m24-5h0m12 2h0m-40 30h0m5 20h0m31 6h0m6-2h0m-33 12h0m-49 207h0m2 20h0m9 6h0m23-4h0m-13 9h0m-29 17h0m6 41h0m-36 16h0m3-1h0m4 6h0m10 11h0m4 4h0m-23 9h0m-4 22h0m8 2h0m11 4h0m-50 7h0m20-3h0m-4 11h0m-29 21h0m-2 10h0m10 1h0m-10 10h0m19 9h0m-34 10h0m-29 17h0m-9 7h0m-34 11h0"/><path stroke="#3b4d73" stroke-width="6.6" d="M0 0m578 733h0m63 8h0m-77 24h0m-102 22h0m102-3h0m-104 14h0m-2 56h0m4 23h0m-46 143h0m-46 17h0m-5 38h0"/><path stroke="#c4e1e5" stroke-width="7.6" d="M0 0m285 990h0"/><path stroke="#597b9f" stroke-width="6.6" d="M0 0m559 280h0m-6 15h0m8-3h0m-8 37h0m-82 14h0m99 17h0m86 7h0m-90 30h0m-70 6h0m70 36h0m-5 6h0m-2 10h0m2 1h0m-97 10h0m89 0h0m0 4h0m-86 5h0m97-2h0m-80 48h0m-20 8h0m87 0h0m-84 19h0m-3 26h0m24 0h0m-9 49h0m-8 13h0m-13 5h0m13 3h0m12 29h0m-25 22h0m17 18h0m-59 63h0m-4 21h0m-2 9h0m-7 32h0m-14 16h0m31-6h0m7 26h0m-38 47h0m6 4h0m10 9h0m15 1h0m15 21h0m-44 32h0m-19 24h0m27-3h0m-69 39h0m-30 41h0m-71 69h0"/><path stroke="#91bccc" stroke-width="7.6" d="M0 0m395 639h0m-19 176h0"/><path stroke="#c4e1e5" stroke-width="6.6" d="M0 0m365 655h0m-2 17h0m-19 222h0m-33 55h0m-5 3h0m-33 70h0"/><path stroke="#6a92b0" stroke-width="7.6" d="M0 0m542 472h0m-134 235h0m37 118h0m-90 209h0"/><path stroke="#a9cfd9" stroke-width="7.6" d="M0 0m306 954h0"/><path stroke="#597b9f" stroke-width="7.6" d="M0 0m479 417h0m-17 132h0m-4 14h0m-36 212h0m-86 312h0m-120 82h0"/><path stroke="#6a92b0" stroke-width="6.6" d="M0 0m462 289h0m0 14h0m93-2h0m46-5h0m-46 9h0m0 20h0m-42 8h0m-55 17h0m105 12h0m-103 12h0m15-1h0m105 11h0m47 15h0m-169 21h0m0 35h0m2-1h0m2 7h0m11 0h0m15 18h0m-23 41h0m10 75h0m6 25h0m-21 39h0m-36 55h0m-23 26h0m34 13h0m-32 30h0m53 2h0m-25 11h0m-34 6h0m-23 27h0m46 7h0m-38 20h0m-10 24h0m-9 20h0m26 9h0m-53 138h0"/><path stroke="#3b4d73" stroke-width="7.6" d="M0 0m555 776h0"/><path stroke="#49648a" stroke-width="7.6" d="M0 0m566 376h0m29 1h0m-31 94h0m4 18h0m48 5h0m-27 35h0m-78 77h0m-49 37h0m-37 251h0m-19 4h0m4 25h0m-2 22h0m31 11h0m-38 25h0m-50 80h0"/><path stroke="#a9cfd9" stroke-width="6.6" d="M0 0m380 538h0m-12 61h0m-3 62h0m11 16h0m0 37h0m8 9h0m-40 182h0m-14 19h0m-11 35h0m-36 90h0m7 15h0"/><path stroke="#6a92b0" stroke-width="6.6" d="M0 0m553 272h0m2 5h0m67 61h0m-145 9h0m-13 8h0m150 10h0m-154 4h0m95 58h0m-88 7h0m-7 15h0m0 3h0m97-1h0m-76 11h0m24 6h0m-47 16h0m38-1h0m15 3h0m44 70h0m-63 33h0m-23 17h0m8 10h0m-27 43h0m-28 32h0m-16 35h0m2-1h0m25 34h0m-30 20h0m-33 30h0m19-1h0m25 4h0m21 4h0m-30 9h0m0 23h0m-4 15h0m-17 5h0m13 12h0m44 19h0m-111 144h0m4-1h0m-122 126h0"/><path stroke="#a9cfd9" stroke-width="7.6" d="M0 0m306 994h0m-16 53h0"/><path stroke="#3b4d73" stroke-width="6.6" d="M0 0m597 703h0m-44 23h0m0 29h0m0 40h0m-80 16h0m-9 39h0m-4 14h0m-63 143h0m11-7h0m-15 30h0m-8 17h0m8 11h0m-28 13h0m47 1h0m-47 13h0m-52 50h0m-68 13h0"/><path stroke="#597b9f" stroke-width="6.6" d="M0 0m585 284h0m-30 4h0m29 3h0m3 23h0m6 18h0m-17 8h0m-107 23h0m92 9h0m2 14h0m7 6h0m-2 16h0m-13 15h0m-42 2h0m90-1h0m-145 43h0m7 21h0m14 19h0m89-1h0m-110 13h0m26-5h0m12 16h0m124 2h0m-158 4h0m22 44h0m-22 13h0m24 1h0m-13 7h0m23 8h0m-36 10h0m-2 15h0m2 4h0m-2 46h0m0 25h0m-12 66h0m-76 63h0m29 12h0m-27 49h0m34 9h0m10-4h0m-36 16h0m5 16h0m12 14h0m13 1h0m-13 38h0m-38 47h0m-29 17h0m19-5h0m2 2h0m-89 91h0m-16 7h0"/><path stroke="#91bccc" stroke-width="6.6" d="M0 0m473 310h0m-15 46h0m7 41h0m-51 96h0m6 51h0m-14 62h0m14 18h0m-27 38h0m-11 24h0m24 0h0m14 10h0m13 0h0m-30 77h0m2 24h0m-39 8h0m-21 148h0m-30 13h0m-19 92h0"/><path stroke="#49648a" stroke-width="7.6" d="M0 0m557 416h0m2 3h0m40 8h0m-8 11h0m-38 15h0m82-4h0m-72 60h0m-80 134h0m116 42h0m-137 31h0m-25 200h0m-2 38h0m-38 53h0m-27 8h0m-44 73h0"/><path stroke="#7ca7bf" stroke-width="7.6" d="M0 0m564 284h0m-184 487h0m5 4h0m-7 57h0m-4 28h0m48 25h0"/><path stroke="#49648a" stroke-width="6.6" d="M0 0m563 287h0m34 38h0m-44 22h0m21 11h0m10 13h0m-31 21h0m2 27h0m2 45h0m19 5h0m38 6h0m-57 5h0m40 45h0m-67 7h0m25 5h0m21-1h0m-8 12h0m-72 43h0m57-4h0m-95 43h0m44 6h0m-42 19h0m0 39h0m44 3h0m-44 26h0m13 4h0m-28 169h0m1 3h0m-40 14h0m2 12h0m0 0h0m-32 17h0m2 4h0m28 2h0m29 1h0m-46 10h0m31 3h0m-4 9h0m-13 9h0m2-3h0m9 11h0m-27 5h0m19 4h0m0 18h0m-32 12h0m6 6h0m-12 19h0m-30 15h0m11 7h0m-2 11h0m-9 4h0m11 2h0m-64 35h0m24-6h0"/><path stroke="#c4e1e5" stroke-width="6.6" d="M0 0m365 477h0m7 120h0m-101 442h0m12-5h0m-67 119h0"/><path stroke="#6a92b0" stroke-width="7.6" d="M0 0m555 359h0m-90 62h0m18 71h0m-23 99h0"/><path stroke="#91bccc" stroke-width="7.6" d="M0 0m365 713h0"/><path stroke="#597b9f" stroke-width="7.6" d="M0 0m578 329h0m-6 49h0m-76 42h0m-36 41h0m2 42h0m34 119h0m-99 206h0m-44 176h0m-27 33h0m2 25h0m-24 48h0"/><path stroke="#7ca7bf" stroke-width="6.6" d="M0 0m465 286h0m-5 39h0m15 25h0m-13 31h0m-4 81h0m-10 152h0m-13 16h0m-38 39h0m0 31h0m9 0h0m-17 71h0m-11 20h0m15 0h0m15-1h0m-34 13h0m53 15h0m-62 28h0m-21 92h0m-23 55h0m24-1h0m-19 13h0m-28 105h0"/><path stroke="#c4e1e5" stroke-width="7.6" d="M0 0m306 971h0m36 4h0m-73 85h0"/><path stroke="#6a92b0" stroke-width="7.6" d="M0 0m568 271h0m-110 333h0m-111 402h0m0 14h0m-21 10h0m-24 71h0"/><path stroke="#597b9f" stroke-width="6.6" d="M0 0m595 265h0m-31 31h0m80 7h0m-76 22h0m-13 18h0m30 8h0m-15 30h0m36 22h0m-51 17h0m-67 82h0m-21 12h0m23 1h0m-32 16h0m40 2h0m-38 3h0m23 16h0m51 3h0m-46 43h0m-28 7h0m11 18h0m-13 3h0m6 3h0m-6 10h0m-17 53h0m-44 65h0m49 10h0m14 2h0m-42 8h0m-19 19h0m59 14h0m-61 43h0m-10 10h0m8 14h0m-6 10h0m-9 4h0m-12 5h0m31 2h0m13 9h0m-15 13h0m28 4h0m-45 8h0m15 17h0m-13 3h0m-19 49h0m-16 26h0m-5 23h0m-21 29h0m38-2h0m-25 8h0m-25 19h0m-49 24h0m-38 36h0"/><path stroke="#c4e1e5" stroke-width="6.6" d="M0 0m399 425h0m-34 204h0m-46 297h0m-12 19h0m6 0h0m8 7h0m-12 14h0m-23 46h0"/><path stroke="#a9cfd9" stroke-width="6.6" d="M0 0m387 638h0m-21 92h0m-45 167h0m-10 76h0m10-2h0m-15 12h0m-27 62h0m-15 17h0m-19 40h0"/><path stroke="#3b4d73" stroke-width="7.6" d="M0 0m465 953h0m-55 54h0m-66 131h0"/><path stroke="#3b4d73" stroke-width="6.6" d="M0 0m555 764h0m2 16h0m-93 30h0m13 56h0m-6 68h0m-7 25h0m-44 32h0m-15 10h0m5 19h0m46 7h0m-55 24h0m-38 9h0m5 4h0m-62 56h0m0 12h0m-67 28h0"/><path stroke="#91bccc" stroke-width="6.6" d="M0 0m460 287h0m0-1h0m-61 319h0m-15 73h0m11 4h0m-15 9h0m-14 69h0m-1 30h0m0 23h0m19 7h0m-58 147h0m2 10h0m21 11h0m-24 21h0m-65 76h0"/><path stroke="#91bccc" stroke-width="7.6" d="M0 0m574 284h0m-175 306h0m-34 54h0m-21 172h0"/><path stroke="#c4e1e5" stroke-width="7.6" d="M0 0m307 981h0"/><path stroke="#7ca7bf" stroke-width="7.6" d="M0 0m517 271h0m-38 41h0m-21 30h0m-95 462h0m15 53h0m27 9h0m-115 201h0"/><path stroke="#597b9f" stroke-width="7.6" d="M0 0m496 394h0m-36 71h0m36 112h0m-78 197h0m-67 233h0"/><path stroke="#6a92b0" stroke-width="6.6" d="M0 0m576 300h0m9 12h0m-32 15h0m11 3h0m-9 17h0m-97 33h0m2 21h0m4 1h0m32 36h0m95 4h0m-36 28h0m-84 7h0m48 12h0m-61 47h0m4 1h0m24 10h0m-24 20h0m0 25h0m-78 152h0m-14 16h0m-2 25h0m61 2h0m-59 9h0m57 3h0m-64 1h0m32 12h0m40-1h0m-46 7h0m14 12h0m5 10h0m-38 10h0m35 3h0m-31 8h0m10 0h0m13 17h0m-27 8h0m0 17h0m4-6h0m0 18h0m2 73h0m-31 9h0m-17 34h0m19 1h0m-51 43h0m2 22h0m-86 68h0"/><path stroke="#49648a" stroke-width="6.6" d="M0 0m566 350h0m-13 11h0m48 35h0m2 55h0m-50 10h0m2-2h0m105 5h0m-105 10h0m-90 37h0m18 7h0m85 2h0m23 18h0m-9 18h0m-122 16h0m95 10h0m42-4h0m-130 9h0m16 40h0m72 15h0m-95 34h0m7 2h0m-72 207h0m2 1h0m53 27h0m-66 12h0m21-5h0m0 4h0m9 17h0m-13 16h0m2 2h0m-10 2h0m13 1h0m6 11h0m-36 28h0m4-1h0m9 10h0m-17 6h0m12 1h0m-10 13h0m23 18h0m-69 22h0m16 23h0m5 6h0m-36 17h0m-49 19h0m9-4h0m-17 9h0m27-4h0"/><path stroke="#49648a" stroke-width="7.6" d="M0 0m587 361h0m-17 17h0m80 76h0m-265 505h0m-1 19h0m17-1h0m-128 157h0m-40 20h0m-9 6h0"/><path stroke="#a9cfd9" stroke-width="7.6" d="M0 0m380 618h0"/><path stroke="#7ca7bf" stroke-width="6.6" d="M0 0m458 292h0m202-3h0m-92 19h0m-108 28h0m4 53h0m41-5h0m-32 37h0m-9 28h0m17 4h0m-6 8h0m78 1h0m-93 31h0m-12 184h0m-45 64h0m11 0h0m-8 37h0m-32 16h0m10 45h0m-10 10h0m0 24h0m-8 15h0m-17 83h0m-5 5h0m-16 36h0m29 14h0m-31 11h0m-30 41h0"/><path stroke="#597b9f" stroke-width="6.6" d="M0 0m591 276h0m21 9h0m-57 29h0m25 19h0m-6 12h0m-8 26h0m-89 59h0m19-3h0m-34 39h0m95 18h0m-86 5h0m63 18h0m-76 47h0m9 18h0m48 58h0m-93 119h0m-31 79h0m21 4h0m-17 15h0m17 16h0m-30 22h0m-19 22h0m24 0h0m8 2h0m4 10h0m-4 24h0m6-3h0m-19 4h0m7 5h0m35 44h0m-94 46h0m14-4h0m-16 26h0m4-4h0m19 2h0m-53 29h0m2 15h0m2 0h0m-78 57h0"/><path stroke="#6a92b0" stroke-width="7.6" d="M0 0m458 362h0m4 120h0m-4 52h0m-78 331h0"/><path stroke="#597b9f" stroke-width="7.6" d="M0 0m498 398h0m-4 111h0m-74 310h0m-42 113h0m-57 144h0"/><path stroke="#3b4d73" stroke-width="6.6" d="M0 0m576 640h0m-29 111h0m-89 130h0m15 13h0m-13 34h0m-57 76h0m53 7h0m0 5h0m-38 17h0m-15 10h0m-27 5h0m-67 66h0m29 12h0m-76 9h0m5 12h0"/><path stroke="#7ca7bf" stroke-width="6.6" d="M0 0m484 296h0m77 51h0m-8 29h0m-88 46h0m88 17h0m-148 198h0m-12 53h0m-28 8h0m17 6h0m13 13h0m13 13h0m-43 24h0m80 3h0m-25 26h0m-27 2h0m8 6h0m-38 5h0m3 2h0m0 11h0m4 12h0m14 27h0m-4 15h0m-2 3h0m-10 36h0m-24 75h0m0 7h0m-2 38h0"/><path stroke="#3b4d73" stroke-width="7.6" d="M0 0m553 649h0m21 4h0m-19 116h0m-95 63h0"/><path stroke="#c4e1e5" stroke-width="6.6" d="M0 0m399 334h0m-34 103h0m-16 320h0m19 6h0m-59 158h0m0 37h0m14 3h0m-73 111h0m10 1h0m-14 19h0m-17 34h0"/><path stroke="#6a92b0" stroke-width="6.6" d="M0 0m460 267h0m78 38h0m17 2h0m-78 60h0m19 5h0m-23 11h0m-2 48h0m92-5h0m-67 25h0m17 3h0m-55 3h0m106-1h0m-104 11h0m15 61h0m-17 38h0m0 11h0m38 15h0m-61 42h0m27 12h0m-38 80h0m-25 61h0m-10 12h0m0 7h0m36 32h0m-57 4h0m6 1h0m10 2h0m17 1h0m-16 7h0m8-3h0m-2 11h0m27-4h0m-19 13h0m15 1h0m2-3h0m-42 4h0m44 15h0m-50 11h0m8 5h0m-13 2h0m42 5h0m-42 10h0m13 12h0m-13 7h0m13 12h0m-44 90h0m29 30h0m-55 5h0m-10 6h0"/><path stroke="#91bccc" stroke-width="6.6" d="M0 0m408 603h0m-7 41h0m-36 59h0m32 51h0m-13 19h0m-18 10h0m-22 161h0m-31 35h0m12 8h0m-2 8h0m-12 12h0m-28 40h0m-21 48h0m-2 20h0"/><path stroke="#a9cfd9" stroke-width="6.6" d="M0 0m365 688h0m34 85h0m-38 52h0m-17 93h0m-31 26h0m17 11h0m-9 9h0m-44 77h0m19 2h0m-11 22h0m-35 20h0m6-4h0m-30 56h0"/><path stroke="#c4e1e5" stroke-width="7.6" d="M0 0m307 922h0m-28 92h0m0 27h0m-50 81h0"/><path stroke="#91bccc" stroke-width="7.6" d="M0 0m366 674h0"/><path stroke="#7ca7bf" stroke-width="7.6" d="M0 0m363 827h0m40-3h0"/><path stroke="#a9cfd9" stroke-width="7.6" d="M0 0m366 777h0m-49 227h0m-69 94h0"/><path stroke="#49648a" stroke-width="6.6" d="M0 0m618 311h0m-57 3h0m24 22h0m-28 41h0m4 4h0m17 5h0m9 24h0m-32 23h0m19 14h0m-17 3h0m23 5h0m-25 45h0m8 12h0m45 3h0m-51 5h0m49 11h0m-51 15h0m2 2h0m-74 9h0m72 9h0m0 11h0m-84 9h0m-9 28h0m13 36h0m13 4h0m-63 213h0m-28 35h0m-15 15h0m19-4h0m2 7h0m19 6h0m-40 28h0m2 6h0m1 5h0m29-5h0m-19 14h0m-2 4h0m-4 9h0m-19 13h0m19 5h0m6 1h0m-29 2h0m39 5h0m-21 8h0m9-3h0m12 0h0m-31 11h0m-29 38h0m-26 28h0m25 0h0m-19 1h0m-25 10h0m44 0h0m7-1h0m-66 22h0m-33 16h0m19-5h0"/><path stroke="#49648a" stroke-width="7.6" d="M0 0m612 265h0m-44 79h0m-2 169h0m27 79h0m-168 228h0m2 90h0m-47 74h0m-25 102h0m-29 33h0"/><path stroke="#597b9f" stroke-width="6.6" d="M0 0m553 280h0m-91 47h0m110 8h0m-19 11h0m32 81h0m-32 17h0m2 3h0m-23 6h0m32 46h0m-104 5h0m0 4h0m4 20h0m1 12h0m14 18h0m-21 5h0m2 4h0m15 56h0m-17 22h0m0-1h0m15 16h0m-13 72h0m-78 60h0m32 1h0m-8 11h0m-5 18h0m-38 31h0m34 2h0m-34 4h0m13 10h0m27 2h0m15-4h0m2-1h0m-55 12h0m38-3h0m5 1h0m-28 19h0m7 0h0m0 9h0m-7 11h0m38-1h0m-48 6h0m4 0h0m4 5h0m0-2h0m2 5h0m5 6h0m-36 46h0m-5 20h0m0 17h0m26 5h0m-45 9h0m19-2h0m13 14h0m-10 5h0m-22 30h0m-8 2h0m27 12h0m-54 24h0m-74 51h0m2 0h0m0-2h0m-2 3h0"/><path stroke="#7ca7bf" stroke-width="6.6" d="M0 0m507 281h0m-47 51h0m-2 12h0m63 14h0m34-5h0m-6 27h0m-89 77h0m7 165h0m-62 57h0m-35 9h0m6 31h0m19 27h0m-19 7h0m-4 10h0m17 50h0m-7 11h0m-19 12h0m5 46h0m8 46h0m-31 15h0m2 1h0m-30 88h0m-34 35h0"/><path stroke="#6a92b0" stroke-width="6.6" d="M0 0m458 307h0m171 5h0m-44 14h0m-125 6h0m160 21h0m-162 59h0m2 12h0m0 26h0m-2 10h0m2 41h0m-52 228h0m-9 28h0m0 5h0m25 20h0m24-4h0m6 3h0m-51 11h0m19 27h0m-40 25h0m-19 11h0m0 8h0m11 0h0m-8 26h0m14 3h0m-17 78h0m-19 43h0m1-4h0m-17 62h0m23-1h0m2-1h0"/><path stroke="#c4e1e5" stroke-width="7.6" d="M0 0m267 1047h0"/><path stroke="#6a92b0" stroke-width="7.6" d="M0 0m528 317h0m-76 421h0m-27 33h0m-51 28h0m4 88h0m25-7h0m-10 47h0m-34 55h0m-46 48h0"/><path stroke="#3b4d73" stroke-width="6.6" d="M0 0m559 654h0m-6 156h0m-74 74h0m-21 29h0m78 13h0m-126 50h0m0 34h0m-45 47h0m0 26h0m-44 26h0"/><path stroke="#91bccc" stroke-width="6.6" d="M0 0m424 504h0m11 18h0m-46 10h0m-4 42h0m-7 129h0m44-1h0m-17 8h0m-33 74h0m-7 17h0m-21 124h0m9 19h0m-32 35h0m2 9h0m-10 23h0m0 3h0m-23 19h0m-2 13h0m-78 115h0"/><path stroke="#91bccc" stroke-width="7.6" d="M0 0m460 283h0m-61 430h0m-118 356h0"/><path stroke="#49648a" stroke-width="7.6" d="M0 0m561 424h0m-6 107h0m-95 55h0m36 83h0m-95 188h0m-12 116h0m40 19h0m-61 30h0"/><path stroke="#a9cfd9" stroke-width="6.6" d="M0 0m458 280h0m-113 597h0m-39 61h0m11 7h0m-4 38h0m15-2h0m-17 7h0m0 10h0m-63 90h0m12 1h0m-44 65h0"/><path stroke="#49648a" stroke-width="6.6" d="M0 0m555 273h0m2 42h0m-4 31h0m15 37h0m4-4h0m32 42h0m-43 9h0m-6 13h0m61 10h0m-48 52h0m76 2h0m-64 6h0m-8 28h0m-17 13h0m23 27h0m-120 14h0m7 4h0m8 9h0m67 8h0m-67 8h0m23 3h0m63 7h0m-63 84h0m-38 10h0m4 9h0m0 28h0m-48 93h0m21 13h0m-19 6h0m-17 51h0m11 0h0m6 4h0m-6 8h0m-25 9h0m14 13h0m6 4h0m30-1h0m-27 7h0m-23 6h0m14-1h0m0 10h0m-29 17h0m14 2h0m-21 6h0m5 22h0m-5 12h0m-18 43h0m0 6h0m-38 7h0m37 7h0m1-1h0m-39 15h0m-63 26h0m-25 17h0"/><path stroke="#a9cfd9" stroke-width="7.6" d="M0 0m309 961h0m14 6h0m21-4h0m-65 80h0m-50 86h0"/><path stroke="#3b4d73" stroke-width="7.6" d="M0 0m338 1134h0"/><path stroke="#c4e1e5" stroke-width="6.6" d="M0 0m408 331h0m16 192h0m-59 66h0m13 29h0m-31 240h0m-3 26h0m-25 28h0m-12 18h0m6-1h0m12 28h0m-79 136h0"/><path stroke="#7ca7bf" stroke-width="7.6" d="M0 0m477 444h0m-112 355h0m11 80h0m11 47h0m-43 43h0m17 52h0m-52 9h0m-3 5h0m22 13h0m16 7h0"/><path stroke="#597b9f" stroke-width="7.6" d="M0 0m389 874h0"/><path stroke="#6a92b0" stroke-width="7.6" d="M0 0m458 510h0m-50 210h0m12 30h0m-31 39h0m54 25h0m-52 40h0m8 31h0m-55 94h0m-25 48h0"/><path stroke="#a9cfd9" stroke-width="7.6" d="M0 0m315 973h0m-99 185h0"/><path stroke="#a9cfd9" stroke-width="6.6" d="M0 0m458 284h0m-74 377h0m-12 10h0m29 96h0m-57 66h0m0 60h0m-52 150h0m-42 44h0m8 0h0"/><path stroke="#7ca7bf" stroke-width="6.6" d="M0 0m595 312h0m-40 84h0m-95 62h0m0 42h0m11 131h0m-68 8h0m-4 65h0m4 1h0m-23 11h0m26-2h0m2 19h0m0-3h0m-36 52h0m29-3h0m-38 6h0m2 0h0m36 12h0m9 16h0m8-3h0m-44 12h0m15 1h0m-13 2h0m21-1h0m-34 10h0m5 2h0m35 11h0m-19 4h0m19 0h0m-8 9h0m-30 19h0m0 3h0m-2 12h0m-4 19h0m4 50h0m-38 56h0m0 14h0m-35 39h0"/><path stroke="#3b4d73" stroke-width="7.6" d="M0 0m450 995h0"/><path stroke="#91bccc" stroke-width="6.6" d="M0 0m365 697h0m5 40h0m-26 211h0m-14 10h0m-24 34h0m15 17h0m23 1h0m-27 17h0m-48 17h0m-2 23h0m14 0h0m-21 32h0"/><path stroke="#6a92b0" stroke-width="6.6" d="M0 0m576 283h0m-80 50h0m-32 69h0m-4 17h0m-2 22h0m0 3h0m9-1h0m16 18h0m-19 9h0m38 6h0m-31 28h0m-101 276h0m50 13h0m-48 7h0m15 12h0m8 0h0m-29 25h0m10-2h0m27 12h0m-19 2h0m32 7h0m4 3h0m-35 6h0m10-1h0m11 14h0m-24 63h0m-38 39h0m0 6h0m0 8h0m-6 27h0m-17 4h0m23 2h0m-50 48h0m-28 13h0m-50 78h0"/><path stroke="#7ca7bf" stroke-width="7.6" d="M0 0m458 385h0m-95 392h0m-18 226h0m-19 6h0m-30 79h0"/><path stroke="#597b9f" stroke-width="7.6" d="M0 0m631 363h0m-173 154h0m4 70h0m-4 9h0m-53 214h0m36 11h0m-31 78h0m-156 239h0"/><path stroke="#597b9f" stroke-width="6.6" d="M0 0m631 300h0m-23 5h0m-82 16h0m29 8h0m21-1h0m27 9h0m-48 39h0m-97 62h0m17 41h0m-17 30h0m0-2h0m4 39h0m13 3h0m4 10h0m-21 22h0m44 2h0m-42 20h0m0 87h0m-31 37h0m75 4h0m-42 18h0m-8 19h0m-59 37h0m42 8h0m-63 31h0m2-3h0m-10 33h0m27-2h0m32 2h0m14 5h0m-57 2h0m-12 9h0m21 1h0m-28 8h0m22 17h0m14 0h0m-10 34h0m8-2h0m-19 7h0m42 12h0m-73 7h0m21 7h0m4-2h0m23 13h0m2 2h0m-48 9h0m-2 18h0m2 14h0m10 2h0m-29 34h0m-24 2h0m-33 58h0m2-3h0m-44 31h0m4-6h0"/><path stroke="#c4e1e5" stroke-width="7.6" d="M0 0m368 663h0m-137 459h0"/><path stroke="#3b4d73" stroke-width="6.6" d="M0 0m574 794h0m-110 107h0m11 26h0m-110 107h0m-20 98h0"/><path stroke="#91bccc" stroke-width="7.6" d="M0 0m393 481h0m-2 156h0m-101 446h0"/><path stroke="#49648a" stroke-width="7.6" d="M0 0m555 319h0m2 31h0m0 45h0m-93 203h0m-69 381h0m4 26h0m-73 74h0m-9 22h0"/><path stroke="#49648a" stroke-width="6.6" d="M0 0m559 289h0m2 55h0m30 1h0m8 11h0m-27 75h0m0 5h0m29 30h0m-48 32h0m-91 15h0m211 4h0m-63 9h0m29 17h0m-181 10h0m4 17h0m2 14h0m93 7h0m-71 32h0m10 13h0m-36 5h0m32 21h0m-8 24h0m-26 17h0m0 29h0m2 5h0m4 0h0m-4 12h0m0 52h0m-61 66h0m19 16h0m-23 5h0m19 6h0m15-5h0m-15 17h0m-29 18h0m63-4h0m-45 26h0m0 2h0m5 0h0m10 2h0m-55 15h0m30-4h0m-9 12h0m3-2h0m8-1h0m-17 8h0m21 4h0m7-3h0m-30 7h0m-6 10h0m36-2h0m-24 14h0m0 11h0m-17 19h0m-20 39h0m0-5h0m-55 47h0m-9 4h0m-50 35h0"/><path stroke="#c4e1e5" stroke-width="6.6" d="M0 0m365 679h0m-27 161h0m-29 51h0m-3 49h0m0 9h0m0 44h0m-27 58h0m-27 31h0m-11 36h0"/><path stroke="#91bccc" stroke-width="7.6" d="M0 0m311 922h0"/><path stroke="#49648a" stroke-width="6.6" d="M0 0m603 288h0m-46 48h0m0 25h0m70 34h0m-15 34h0m-36 28h0m13 3h0m-34 13h0m-2 9h0m2 33h0m-2 28h0m51 4h0m0 9h0m-47 16h0m-99 36h0m4 10h0m-2 30h0m-2 18h0m4 2h0m-4 71h0m-55 113h0m24 12h0m-32 14h0m13 14h0m-5 18h0m13 8h0m-23 8h0m44-2h0m-42 7h0m-11 12h0m11-7h0m19 14h0m27 0h0m-46 7h0m-25 17h0m4-4h0m25 1h0m-14 13h0m-15 13h0m6-3h0m44 5h0m5-7h0m-62 8h0m13 1h0m-13 9h0m11-2h0m-8 10h0m39-1h0m-50 11h0m17 6h0m-7 10h0m0 5h0m-39 26h0m-7 9h0m-6 10h0m8-4h0m5 7h0m-5 10h0m-15 10h0m-21 5h0m15-1h0m7-1h0m-53 15h0m15 1h0m-40 21h0m-7 7h0"/><path stroke="#49648a" stroke-width="7.6" d="M0 0m563 536h0m-88 61h0m-13 52h0m13 51h0m-27 82h0m-30 102h0m-36 84h0m28 55h0"/><path stroke="#7ca7bf" stroke-width="7.6" d="M0 0m494 390h0m-34 92h0m-59 362h0m-73 155h0"/><path stroke="#597b9f" stroke-width="6.6" d="M0 0m563 365h0m-8 10h0m29 14h0m1-3h0m-32 42h0m-63 38h0m-26 18h0m-6 4h0m152 1h0m-53 21h0m-74 39h0m-12 20h0m6 4h0m2 11h0m-6 15h0m-15 95h0m0 29h0m7 23h0m-9 28h0m-72 61h0m36 14h0m-15 19h0m32 3h0m-59 6h0m51 8h0m-19 18h0m4 5h0m13 8h0m-61 7h0m39 5h0m40 6h0m-61 3h0m-2 28h0m21 2h0m-40 16h0m-19 36h0m-10 54h0m6-1h0m-46 26h0m17 1h0m-5 11h0m-46 16h0m2-4h0m-19 25h0"/><path stroke="#3b4d73" stroke-width="7.6" d="M0 0m376 1019h0"/><path stroke="#c4e1e5" stroke-width="6.6" d="M0 0m363 691h0m2 13h0m-21 104h0m-21 133h0m-17 32h0m7 5h0m-15 10h0m-10 44h0m-17 12h0m-2 10h0m4 3h0m-25 23h0m2 11h0m-13 23h0"/><path stroke="#a9cfd9" stroke-width="7.6" d="M0 0m376 732h0m-70 279h0m-4 12h0"/><path stroke="#6a92b0" stroke-width="6.6" d="M0 0m557 270h0m76 56h0m8 7h0m-75 4h0m-70 67h0m-34 27h0m7-1h0m-11 5h0m9 73h0m-2 15h0m10 6h0m2 12h0m-17 57h0m2 15h0m-99 142h0m38 13h0m15 4h0m-23 7h0m-15 6h0m-13 13h0m11-3h0m46-2h0m-19 9h0m7 1h0m-25 11h0m39-2h0m-61 27h0m5 29h0m8 29h0m-8 18h0m16 0h0m21 17h0m-42 12h0m-16 45h0m8 10h0m-30 16h0m-8 31h0"/><path stroke="#a9cfd9" stroke-width="6.6" d="M0 0m368 579h0m-5 59h0m17 80h0m-4 45h0m-32 149h0m-38 54h0m32-5h0m-29 14h0m-3 3h0m11 31h0m-11 7h0m-25 17h0m5 9h0m-13 17h0m12 0h0m-31 23h0m4 0h0m4 12h0m4-3h0"/><path stroke="#597b9f" stroke-width="7.6" d="M0 0m477 288h0m-92 625h0m12 72h0m-48 65h0"/><path stroke="#91bccc" stroke-width="6.6" d="M0 0m416 628h0m-27 10h0m-26 123h0m2 6h0m19 25h0m-21 11h0m2 15h0m11 1h0m0 2h0m-32 40h0m19 5h0m-37 117h0m-20 3h0m22 13h0m-22 22h0m-33 45h0"/><path stroke="#3b4d73" stroke-width="6.6" d="M0 0m555 709h0m-95 138h0m-2 32h0m-52 185h0m-61 33h0m-1 30h0"/><path stroke="#7ca7bf" stroke-width="6.6" d="M0 0m458 265h0m53 75h0m-51 9h0m0 89h0m0 5h0m7 82h0m-61 144h0m14 14h0m-27 16h0m8 2h0m-33 25h0m38 16h0m-43 7h0m2 23h0m17 29h0m-17 13h0m11-1h0m25-1h0m2-3h0m-38 12h0m17-2h0m28 32h0m-66 64h0m22 2h0m-22 45h0m3-2h0m0 30h0m-41 15h0m22 53h0"/><path stroke="#c4e1e5" stroke-width="7.6" d="M0 0m288 1010h0"/><path stroke="#6a92b0" stroke-width="7.6" d="M0 0m464 366h0m13 116h0m-154 563h0m21 8h0"/><path stroke="#49648a" stroke-width="6.6" d="M0 0m580 463h0m-21 11h0m0 23h0m-84 13h0m-17 4h0m44 66h0m55-1h0m-97 32h0m40 31h0m-38 8h0m7 1h0m27 3h0m-38 35h0m2 105h0m-23 19h0m-52 88h0m4 10h0m-4 12h0m44 26h0m-44 8h0m25 2h0m-7 14h0m11 8h0m-51 9h0m2 13h0m0 8h0m0-2h0m30 5h0m-32 17h0m3 2h0m18 3h0m-27 9h0m6-5h0m-16 10h0m-2 11h0m0 22h0m-30 20h0m-9 5h0m7-1h0m-27 6h0m18-1h0m-25 15h0m-31 18h0m-17 11h0"/><path stroke="#6a92b0" stroke-width="6.6" d="M0 0m557 287h0m13 35h0m-82 44h0m99 8h0m-129 4h0m97 8h0m-95 23h0m17 43h0m108-4h0m-123 27h0m99 4h0m-101 10h0m0 3h0m0 8h0m-2 40h0m2 2h0m-2 6h0m25 22h0m-25 44h0m19-5h0m-46 78h0m-9 1h0m-21 46h0m-31 8h0m38 50h0m-7 16h0m2 19h0m-8 6h0m34-1h0m-63 15h0m4-2h0m35-5h0m-29 23h0m29-6h0m-42 12h0m34 0h0m-4 8h0m13 0h0m-30 8h0m-13 5h0m19 3h0m11 12h0m15-1h0m-40 8h0m17 18h0m-22 7h0m-57 75h0m38 2h0m-38 22h0m19 12h0m-39 20h0m6 23h0m-32 17h0"/><path stroke="#c4e1e5" stroke-width="6.6" d="M0 0m365 624h0m-59 335h0m-20 69h0m-11 24h0m-30 52h0m-10 12h0m-2 7h0"/><path stroke="#7ca7bf" stroke-width="7.6" d="M0 0m365 797h0m15 49h0m-36 141h0"/><path stroke="#6a92b0" stroke-width="7.6" d="M0 0m479 351h0m-21 206h0m-10 129h0m-133 315h0m32 23h0m-21 21h0m-11 21h0m29-1h0"/><path stroke="#3b4d73" stroke-width="6.6" d="M0 0m601 622h0m-46 32h0m15 98h0m-194 307h0m9 11h0m-47 56h0"/><path stroke="#49648a" stroke-width="7.6" d="M0 0m405 887h0m-4 77h0m-19 25h0m-14 41h0m-19 24h0m-43 25h0"/><path stroke="#c4e1e5" stroke-width="7.6" d="M0 0m365 547h0"/><path stroke="#7ca7bf" stroke-width="6.6" d="M0 0m578 275h0m-97 106h0m-16 9h0m-1 45h0m-6 10h0m46 18h0m-46 15h0m-31 190h0m-30 32h0m27 21h0m1 12h0m-24 31h0m13-2h0m-51 8h0m13 4h0m11-1h0m-22 18h0m24-5h0m-24 38h0m36 14h0m-31 7h0m-2 14h0m4 33h0m-28 66h0m0 8h0m9 57h0m-47 19h0m43-2h0m-43 10h0m11-1h0m6 14h0m-35 11h0m4 5h0m-2 6h0m4 1h0m-27 5h0"/><path stroke="#3b4d73" stroke-width="7.6" d="M0 0m557 773h0m-194 300h0"/><path stroke="#597b9f" stroke-width="7.6" d="M0 0m584 334h0m-107 193h0m13 78h0m-91 237h0m25 1h0m-52 108h0m-2 12h0"/><path stroke="#91bccc" stroke-width="6.6" d="M0 0m464 391h0m1 33h0m-64 128h0m15 45h0m-38 78h0m-15 6h0m26 80h0m12 48h0m-56 116h0m-39 52h0m11 5h0m-10 32h0m18 17h0m-19 16h0m-27 19h0"/><path stroke="#597b9f" stroke-width="6.6" d="M0 0m597 268h0m-38 59h0m4 0h0m55 15h0m-156 8h0m102 6h0m-7 6h0m27 15h0m-120 31h0m114 10h0m-109 75h0m-7 8h0m146 15h0m-137 39h0m2 10h0m46-3h0m-57 9h0m13 2h0m-15 12h0m13 5h0m-11 36h0m34 72h0m-29 11h0m-38 65h0m12 16h0m-71 35h0m-5 30h0m3-6h0m59 9h0m-53 10h0m34 3h0m-43 14h0m20-1h0m4 16h0m-21 4h0m8 6h0m4 0h0m2-5h0m38 13h0m-57 8h0m11 1h0m11 17h0m-22 8h0m24 10h0m-7 11h0m-2 16h0m-21 35h0m-13 22h0m-19 13h0m28 0h0m-63 20h0m16-1h0m13-3h0m25 1h0m-38 17h0m-21 3h0m-40 49h0"/><path stroke="#a9cfd9" stroke-width="6.6" d="M0 0m382 626h0m-38 311h0m-37 17h0m-1 46h0m5 5h0m-40 30h0m-2 18h0m33 2h0m-23 2h0m-21 28h0m-2 3h0m-8 14h0"/><path stroke="#597b9f" stroke-width="7.6" d="M0 0m462 538h0m0 25h0m11 53h0m-13 47h0m-59 292h0m-84 87h0m27 8h0"/><path stroke="#597b9f" stroke-width="6.6" d="M0 0m646 297h0m-89 32h0m13 29h0m4 73h0m46 3h0m-160 63h0m38 22h0m-33 5h0m-3 15h0m-2 35h0m2 6h0m51 22h0m-29 59h0m-26 3h0m0 10h0m0 45h0m4 44h0m-56 52h0m-24 19h0m13 28h0m15 1h0m-36 16h0m15 1h0m-15 11h0m25 4h0m-34 2h0m30 2h0m17 8h0m-40 15h0m29 22h0m-25 12h0m11-3h0m-11 11h0m13 2h0m6 0h0m11-6h0m-43 20h0m-19 57h0m1-3h0m-24 25h0m-4 12h0m15-2h0m-19 8h0m-25 31h0m-32 13h0m2-1h0m-19 27h0m-17 17h0"/><path stroke="#c4e1e5" stroke-width="6.6" d="M0 0m412 504h0m-44 266h0m-61 218h0m-66 123h0m-10 14h0m-9 18h0"/><path stroke="#a9cfd9" stroke-width="6.6" d="M0 0m389 616h0m8 3h0m-34 27h0m2 111h0m-18 88h0m-66 166h0m36 1h0m-32 31h0m-6 9h0m-31 43h0m0-1h0m4-4h0"/><path stroke="#6a92b0" stroke-width="6.6" d="M0 0m561 305h0m32 34h0m-131 101h0m-4 33h0m7 4h0m-3 46h0m19 43h0m-23 36h0m28 29h0m-83 84h0m17 9h0m-2 24h0m-48 34h0m25 2h0m-25 8h0m40 10h0m-44 26h0m6 2h0m19 0h0m10-1h0m-36 3h0m9 3h0m21 3h0m-29 17h0m33 3h0m2 23h0m-6 21h0m-25 8h0m-7 7h0m2-3h0m20 15h0m2 16h0m-40 53h0m-3 9h0m-27 11h0m27 4h0m0 3h0m-23 42h0m-38 24h0m-19 11h0m19 9h0m-2 8h0m-65 44h0"/><path stroke="#91bccc" stroke-width="6.6" d="M0 0m403 581h0m-19 119h0m-21 33h0m43 37h0m-41 38h0m-2 22h0m-19 112h0m1 13h0m-19 13h0m-15 27h0m-5 28h0m1-3h0m19 1h0m-32 48h0m-23 8h0m-15 14h0m21-2h0"/><path stroke="#49648a" stroke-width="7.6" d="M0 0m553 443h0m-137 484h0m-42 51h0m2 35h0m-13 3h0m15 37h0m-61 36h0"/><path stroke="#49648a" stroke-width="6.6" d="M0 0m582 265h0m59 54h0m-88 55h0m4-2h0m-2 23h0m6-1h0m-4 11h0m-67 28h0m65 2h0m6-3h0m7 32h0m16 28h0m13 6h0m-38 80h0m-63 23h0m4 19h0m26 54h0m-57 60h0m-68 126h0m-2 9h0m4 22h0m0 16h0m28-1h0m-11 6h0m-44 23h0m27-2h0m0 17h0m45-5h0m-85 10h0m17-3h0m42 7h0m11 0h0m-36 6h0m-25 3h0m19 2h0m-15 11h0m-13 5h0m2 0h0m34 2h0m-23 10h0m8-4h0m-21 15h0m24 2h0m16 1h0m-38 6h0m0 2h0m15 3h0m-35 13h0m-1 6h0m-29 32h0m15 4h0m17 1h0m-22 5h0m36 3h0m-55 1h0m24 5h0m10 10h0m-31 6h0m-51 14h0m-2 10h0m13-4h0m14 2h0m-31 10h0m-15 10h0m2-2h0m-10 8h0"/><path stroke="#a9cfd9" stroke-width="7.6" d="M0 0m325 990h0m-58 103h0m-47 57h0"/><path stroke="#7ca7bf" stroke-width="7.6" d="M0 0m460 434h0m-59 339h0m-57 223h0m-19 71h0m-58 33h0"/><path stroke="#7ca7bf" stroke-width="6.6" d="M0 0m572 264h0m-65 32h0m-24 111h0m-14 128h0m-5 42h0m-56 111h0m-24 22h0m11 67h0m0 2h0m-30 14h0m0 11h0m17-3h0m-2 18h0m-15 26h0m3-2h0m6 61h0m-6 31h0m-21 32h0m-3 15h0m-12 11h0m12 12h0m-38 25h0m17 12h0m-31 25h0m23 0h0m-30 7h0"/><path stroke="#c4e1e5" stroke-width="7.6" d="M0 0m309 923h0m-42 112h0"/><path stroke="#91bccc" stroke-width="7.6" d="M0 0m366 766h0m-1 84h0m-82 226h0"/><path stroke="#6a92b0" stroke-width="7.6" d="M0 0m458 273h0m28 273h0m25 57h0m-103 50h0m50 40h0m-44 32h0m-27 105h0m21 38h0"/><path stroke="#3b4d73" stroke-width="6.6" d="M0 0m458 756h0m137 4h0m-111 74h0m-85 221h0"/><path stroke="#49648a" stroke-width="7.6" d="M0 0m557 402h0m-2 94h0m-288 628h0"/><path stroke="#91bccc" stroke-width="6.6" d="M0 0m393 598h0m6 23h0m-27 101h0m40 23h0m-49 37h0m-56 193h0m12 9h0m-13 23h0m-29 55h0m-10 11h0m14 1h0m4 13h0m3-1h0m-21 8h0m-7 10h0m-34 38h0"/><path stroke="#597b9f" stroke-width="6.6" d="M0 0m553 334h0m31 27h0m70 44h0m-196 23h0m0 85h0m97 9h0m-69 13h0m-11 42h0m21 20h0m-38 112h0m-38 103h0m0 4h0m9 5h0m-49 18h0m7 0h0m27 15h0m-46 10h0m16 15h0m17 4h0m-38 5h0m3 6h0m48-2h0m-30 5h0m11-1h0m29 4h0m-61 10h0m36-6h0m-36 12h0m13 8h0m23 7h0m9-2h0m16 0h0m-48 7h0m21 1h0m11 20h0m-45 20h0m19-1h0m19 4h0m-29 39h0m-61 27h0m33-6h0m0 4h0m0 5h0m-38 8h0m3 13h0m-3 2h0m1 2h0m4-1h0m10-1h0m-23 11h0m-6 27h0m2-6h0m-27 14h0m12 0h0m9-3h0m-32 14h0m11-1h0"/><path stroke="#6a92b0" stroke-width="7.6" d="M0 0m473 429h0m-72 374h0m-12 32h0m21 25h0m-91 173h0m4 0h0m-12 26h0m33 7h0"/><path stroke="#c4e1e5" stroke-width="6.6" d="M0 0m365 618h0m3 67h0m-19 194h0m-5 78h0m-38 12h0m-71 151h0m-15 27h0"/><path stroke="#a9cfd9" stroke-width="6.6" d="M0 0m458 265h0m-114 617h0m-38 68h0m9 25h0m-9 6h0m0 8h0m1 2h0m-1 5h0m0 8h0m-37 65h0m-2 7h0m-11 26h0m-13 9h0m-17 34h0"/><path stroke="#6a92b0" stroke-width="6.6" d="M0 0m608 291h0m-104 50h0m49-2h0m-65 21h0m-30 35h0m4 2h0m-2 18h0m9 231h0m-5 9h0m0 18h0m-61 86h0m5-3h0m-2 37h0m-34 10h0m15 12h0m-15 1h0m13 12h0m2 9h0m10 1h0m15-1h0m-7 9h0m-37 25h0m-5 1h0m19 1h0m24 2h0m-30 12h0m34-5h0m-13 11h0m-31 4h0m-3 14h0m2-2h0m3 17h0m33 0h0m-10 17h0m-28 18h0m3 3h0m4-4h0m-26 37h0m0 27h0m0 18h0m-18 12h0m-17 5h0m-36 35h0m27 1h0m-44 2h0m11 23h0m-13 14h0m2-6h0"/><path stroke="#49648a" stroke-width="6.6" d="M0 0m599 343h0m-42 57h0m51 13h0m-28 19h0m-94 8h0m10 13h0m-23 54h0m-9 12h0m91 56h0m-90 7h0m-7 71h0m0 15h0m6 36h0m0 50h0m-52 87h0m-6 19h0m42 7h0m-43 31h0m1 18h0m-41 16h0m87-3h0m-82 10h0m4 3h0m15 0h0m-23 2h0m2 5h0m2 3h0m14 1h0m-8 22h0m34-7h0m-40 23h0m-7 2h0m0 1h0m5 18h0m8 0h0m17 1h0m2 4h0m-42 21h0m-8 12h0m0 15h0m-28 19h0m27-1h0m1 3h0m-26 5h0m6-2h0m22 3h0m-41 6h0m13-1h0m4 4h0m-40 15h0m0-1h0m5 4h0m-38 24h0m8-6h0m-4 11h0"/><path stroke="#3b4d73" stroke-width="7.6" d="M0 0m471 886h0"/><path stroke="#7ca7bf" stroke-width="6.6" d="M0 0m555 268h0m-95 33h0m2 108h0m-4 20h0m38-4h0m15 2h0m-38 149h0m-48 69h0m-45 52h0m17 20h0m-2 109h0m-30 13h0m53 0h0m-53 5h0m3 10h0m-3 3h0m-2 21h0m2 10h0m13 18h0m-15 38h0m-16 38h0m-41 43h0m19 0h0m-6 10h0m2 2h0m-35 40h0m0 21h0m-38 6h0m-30 61h0"/><path stroke="#3b4d73" stroke-width="6.6" d="M0 0m566 686h0m-106 195h0m4 9h0m-119 231h0"/><path stroke="#597b9f" stroke-width="7.6" d="M0 0m629 301h0m-76 296h0m-91 103h0m-88 165h0m25 23h0m-12 58h0m23 28h0m-112 129h0"/><path stroke="#91bccc" stroke-width="7.6" d="M0 0m374 811h0"/><path stroke="#7ca7bf" stroke-width="7.6" d="M0 0m496 426h0m-133 385h0m2 93h0m-20 118h0m-45 49h0m-46 39h0"/><path stroke="#a9cfd9" stroke-width="7.6" d="M0 0m307 996h0"/><path stroke="#49648a" stroke-width="7.6" d="M0 0m582 355h0m-29 95h0m-175 507h0m-12 24h0"/><path stroke="#597b9f" stroke-width="7.6" d="M0 0m408 813h0m-43 105h0m0 40h0m-54 109h0m-23 34h0m-22 15h0m24 6h0"/><path stroke="#597b9f" stroke-width="6.6" d="M0 0m555 309h0m-38 34h0m55 30h0m12 3h0m9 30h0m-82 2h0m31 34h0m19 18h0m-40 12h0m-31 8h0m-28 25h0m-4 18h0m2 73h0m11 2h0m25 54h0m-38 75h0m-19 16h0m-40 89h0m2 3h0m11 16h0m-44 12h0m-2 10h0m35 4h0m-14 11h0m42 4h0m-64 10h0m1 4h0m73 4h0m-54 10h0m-22 10h0m2 5h0m7-2h0m27 2h0m-15 48h0m-18 14h0m-19 18h0m-45 46h0m42-2h0m-33 9h0m14 1h0m-6 5h0m-13 6h0m3 3h0m0-3h0m-28 15h0m32-7h0m-6 11h0m-34 19h0m-21 7h0m2 0h0m19 0h0m-23 8h0m-13 15h0m-8 7h0m4-2h0m-21 14h0"/><path stroke="#6a92b0" stroke-width="6.6" d="M0 0m608 320h0m-148 199h0m-2 8h0m-57 225h0m9 20h0m25-2h0m-67 49h0m23-1h0m12-2h0m-38 25h0m41 24h0m6 14h0m-67 13h0m35 6h0m5 9h0m20 1h0m-42 49h0m-16 13h0m-3 9h0m1 20h0m-39 40h0m3-3h0m0 4h0m6 7h0m10 0h0m-21 22h0m2 0h0m1 7h0m-28 4h0m27 5h0m7-5h0m-25 10h0m23 3h0m-34 10h0m13 7h0m-32 7h0m27-1h0m-18 9h0m-47 26h0"/><path stroke="#a9cfd9" stroke-width="7.6" d="M0 0m344 929h0m-65 147h0m-34 38h0"/><path stroke="#a9cfd9" stroke-width="6.6" d="M0 0m437 528h0m-31 10h0m-40 178h0m-57 252h0m10 2h0m2 7h0m-33 74h0m-21 12h0m0 18h0m0 6h0m-15 2h0m2 5h0m-23 33h0m4-6h0m6 0h0m-17 16h0"/><path stroke="#7ca7bf" stroke-width="7.6" d="M0 0m399 776h0m-29 77h0m-25 124h0m-78 102h0m2 12h0"/><path stroke="#49648a" stroke-width="6.6" d="M0 0m555 404h0m-2 8h0m21 30h0m2 1h0m-23 7h0m2 10h0m-82 24h0m80 29h0m17 25h0m-17 15h0m-57 107h0m-34 47h0m-12 129h0m-2 6h0m-28 19h0m2 26h0m0 15h0m-23 6h0m-21 14h0m-13 7h0m24 12h0m14 0h0m-37 8h0m10-2h0m0 12h0m-11 7h0m-2 8h0m9-2h0m40 0h0m-49 8h0m2-1h0m0-1h0m7 5h0m-4 3h0m6 1h0m10-2h0m47 3h0m-68 17h0m3-2h0m-3 18h0m7-1h0m65-1h0m-90 12h0m20-4h0m5 24h0m-26 6h0m0 11h0m0 4h0m0 15h0m-65 7h0m36 0h0m10-6h0m9 5h0m-28 6h0m1-3h0m-19 10h0m18-2h0m0 0h0m1 3h0m-19 9h0m-3 5h0m-18 10h0m0 4h0m-17 2h0"/><path stroke="#3b4d73" stroke-width="6.6" d="M0 0m578 664h0m-175 275h0"/><path stroke="#91bccc" stroke-width="7.6" d="M0 0m365 736h0m-59 290h0m-90 133h0"/><path stroke="#91bccc" stroke-width="6.6" d="M0 0m410 569h0m-15 91h0m-17 68h0m-13 8h0m59 52h0m-58 5h0m-21 94h0m-28 85h0m6 4h0m-17 25h0m5 22h0m8-4h0m11-3h0m-23 9h0m2 3h0m-30 30h0m0 13h0m-21 29h0m9-3h0m-17 11h0"/><path stroke="#7ca7bf" stroke-width="6.6" d="M0 0m460 323h0m146 44h0m-146 110h0m2 136h0m-44 111h0m-12 7h0m-21 51h0m-5 27h0m9 25h0m-24 25h0m-2 17h0m19 19h0m-19 21h0m5 12h0m-24 42h0m0 29h0m0 25h0m-27 33h0m27 8h0m-75 17h0m4-1h0m2 2h0m13 8h0m-21 11h0m-11 2h0m4 7h0m-34 39h0"/><path stroke="#c4e1e5" stroke-width="7.6" d="M0 0m285 1055h0"/><path stroke="#6a92b0" stroke-width="7.6" d="M0 0m462 529h0m-90 276h0m-61 231h0m34 11h0m-100 90h0"/><path stroke="#c4e1e5" stroke-width="6.6" d="M0 0m397 567h0m-114 466h0m-10 28h0m-19 25h0m-13 32h0"/><path stroke="#7ca7bf" stroke-width="6.6" d="M0 0m564 319h0m-11 18h0m-147 353h0m2 23h0m0 22h0m-7 65h0m-19 10h0m-16 35h0m56 5h0m-14 9h0m-42 9h0m-1 56h0m-21 78h0m-35 12h0m-2 17h0m38-5h0m-39 18h0m1 3h0m-1 7h0m5-3h0m6 2h0m-46 15h0m-21 33h0m25-1h0m15-2h0m-26 10h0m5-3h0m-21 7h0m2 2h0m4 3h0m8-4h0m7 0h0m-24 22h0m-16 1h0"/><path stroke="#c4e1e5" stroke-width="6.6" d="M0 0m376 449h0m49 66h0m-62 101h0m-19 284h0m-33 44h0m-40 127h0m-25 35h0m4-2h0"/><path stroke="#49648a" stroke-width="7.6" d="M0 0m616 513h0m-225 378h0m-23 102h0m-23 63h0m-19 16h0m18 7h0m-98 64h0"/><path stroke="#91bccc" stroke-width="6.6" d="M0 0m374 560h0m-9 85h0m45 58h0m-21 119h0m-7 4h0m-65 167h0m-4 14h0m8-4h0m-10 10h0m10 0h0m-14 9h0m4-2h0m-5 19h0m-14 21h0m8 1h0m-31 7h0m-26 51h0m-8 3h0m4 2h0m-10 7h0m6 1h0m17-4h0"/><path stroke="#3b4d73" stroke-width="6.6" d="M0 0m458 866h0m-95 205h0m-115 70h0"/><path stroke="#597b9f" stroke-width="7.6" d="M0 0m365 944h0m5 13h0m-74 150h0"/><path stroke="#a9cfd9" stroke-width="6.6" d="M0 0m374 648h0m-4 46h0m-7 62h0m-56 214h0m4 23h0m-4 13h0m38-4h0m-38 15h0m-32 43h0m0 12h0m-27 25h0m-3 27h0m-14 7h0m-4 9h0m2-1h0"/><path stroke="#91bccc" stroke-width="7.6" d="M0 0m357 886h0m-88 208h0"/><path stroke="#6a92b0" stroke-width="7.6" d="M0 0m458 481h0m-63 308h0m-23 94h0m-9 39h0m13 14h0m-32 95h0m-38 20h0m-33 37h0m2 26h0"/><path stroke="#49648a" stroke-width="6.6" d="M0 0m555 355h0m15 10h0m-15 23h0m0 131h0m-2 13h0m-78 181h0m-13 22h0m15 16h0m-88 126h0m16 15h0m-2 27h0m-6 5h0m30-4h0m-62 23h0m7 0h0m-9 7h0m3 0h0m35-1h0m-36 18h0m-2 5h0m3-2h0m35-1h0m-38 28h0m2-5h0m0 5h0m3-3h0m35 4h0m-37 7h0m4-2h0m12 3h0m5 6h0m-24 11h0m2 1h0m-21 36h0m19-1h0m-56 28h0m2-2h0m-2 5h0m2 8h0m35 4h0m-78 8h0m28 0h0m-23 17h0m-21 8h0m29-3h0m-40 12h0"/><path stroke="#7ca7bf" stroke-width="7.6" d="M0 0m475 438h0m19 124h0m-129 300h0"/><path stroke="#c4e1e5" stroke-width="7.6" d="M0 0m366 468h0m-137 666h0"/><path stroke="#a9cfd9" stroke-width="7.6" d="M0 0m294 1020h0"/><path stroke="#6a92b0" stroke-width="6.6" d="M0 0m608 344h0m-45 10h0m-10 28h0m-91 43h0m-4 33h0m-34 293h0m-37 12h0m-24 51h0m42 6h0m-18 19h0m-19 34h0m37 2h0m-10 40h0m-51 57h0m3 17h0m-26 10h0m23 15h0m1 9h0m-39 8h0m9 8h0m4 0h0m6 5h0m19-2h0m-38 9h0m15 0h0m-14 15h0m0-2h0m42 0h0m-36 14h0m-32 10h0m15 3h0m-34 11h0m28-1h0m2-4h0m-13 13h0m11-5h0m-42 10h0m21 0h0m-28 15h0m-14 17h0m-3 12h0m5-6h0"/><path stroke="#597b9f" stroke-width="6.6" d="M0 0m557 333h0m21 4h0m-23 16h0m-95 10h0m24 14h0m140 36h0m-166 19h0m2 62h0m-2 30h0m0 18h0m13 14h0m-13 27h0m19 24h0m-17 9h0m7 31h0m19-4h0m-26 64h0m-63 137h0m-29 18h0m21 5h0m6-2h0m-8 25h0m18 4h0m-40 3h0m20 6h0m18-3h0m-27 16h0m-2 22h0m-11 9h0m83-2h0m-40 9h0m-38 13h0m-2 8h0m-1 11h0m-10 50h0m-46 7h0m6 10h0m29 0h0m-38 13h0m7 3h0m-2 9h0m17 4h0m-22 9h0m-25 7h0m5 2h0m-19 7h0m16 1h0m-29 4h0m13 2h0m0 3h0m12-4h0m0-1h0m-29 13h0m2-2h0m17 2h0m0-1h0m2-3h0m-2 7h0m-28 15h0m-25 23h0"/><path stroke="#49648a" stroke-width="7.6" d="M0 0m511 727h0m-110 203h0m0 16h0m32 24h0"/><path stroke="#c4e1e5" stroke-width="6.6" d="M0 0m254 1104h0m-23 30h0m15-5h0m-28 26h0"/><path stroke="#49648a" stroke-width="6.6" d="M0 0m751 276h0m375 27h0m-439 42h0m-109 28h0m167 2h0m-192 6h0m6 0h0m312 12h0m-176 38h0m48 24h0m-142 39h0m94 48h0m-33 32h0m-204 11h0m330-1h0m-45 37h0m-217 9h0m146 36h0m80 8h0m11 32h0m-81 69h0m-222 15h0m-36 78h0m319 0h0m-342 27h0m0 24h0m-29 12h0m0 8h0m21-1h0m25-2h0m-36 27h0m-16 15h0m29 23h0m-30 14h0m7 5h0m-28 14h0m-37 44h0m-1 5h0m38 5h0m-111 62h0m4 1h0m-11 6h0"/><path stroke="#a9cfd9" stroke-width="6.6" d="M0 0m380 502h0m9 107h0m-44 285h0m-38 108h0m2 13h0m-26 25h0m-10 23h0m8-1h0m-31 15h0m46-4h0m-29 11h0m-17 13h0m-5 21h0m1-5h0m-13 12h0m8-1h0m-8 8h0m-2 9h0"/><path stroke="#c4e1e5" stroke-width="7.6" d="M0 0m231 1137h0"/><path stroke="#a9cfd9" stroke-width="7.6" d="M0 0m422 617h0m-153 446h0m-36 72h0"/><path stroke="#6a92b0" stroke-width="7.6" d="M0 0m366 910h0m-22 82h0m-27 62h0m-36 32h0m-59 68h0"/><path stroke="#91bccc" stroke-width="6.6" d="M0 0m445 571h0m-77 261h0m-51 162h0m-6 21h0m-26 41h0m-8 21h0m0-1h0m-6 8h0m14-2h0m-37 42h0m-9 4h0m0 3h0m-10 11h0m0 1h0m4-1h0m0 3h0m-17 14h0"/><path stroke="#7ca7bf" stroke-width="7.6" d="M0 0m366 900h0m-1 72h0m-115 147h0"/><path stroke="#597b9f" stroke-width="7.6" d="M0 0m458 494h0m-73 412h0m-20 49h0m-21 105h0m-61 25h0"/><path stroke="#6a92b0" stroke-width="6.6" d="M0 0m652 509h0m-188 7h0m-6 100h0m-57 105h0m-16 76h0m27 24h0m-46 18h0m29 2h0m-17 30h0m19-2h0m-34 7h0m0 11h0m40 43h0m-38 9h0m-42 71h0m0 14h0m-16 26h0m2 4h0m-3 5h0m1 0h0m14-3h0m-4 8h0m-48 34h0m0 1h0m-15 11h0m21 1h0m-21 3h0m13-2h0m-17 15h0m4-7h0m15 0h0m-36 12h0m10-1h0m-4 6h0m4 6h0m3-7h0m-24 15h0m5-1h0m4-3h0m0-2h0m-11 13h0m2-2h0m-6 8h0m2-3h0m4 0h0"/><path stroke="#91bccc" stroke-width="7.6" d="M0 0m269 1095h0"/><path stroke="#3b4d73" stroke-width="6.6" d="M0 0m705 265h0m40 4h0m283 8h0m-283 15h0m-55 22h0m269 23h0m-265 7h0m49 10h0m2 47h0m74 3h0m115-1h0m-183 31h0m185 6h0m-231 10h0m-19 34h0m59 6h0m-2 50h0m41 32h0m54-2h0m28 45h0m-176 4h0m53 35h0m2 5h0m2 9h0m-75 7h0m27 1h0m46 25h0m-63 13h0m11 42h0m50 38h0m-53 57h0m-230 7h0m17 60h0m-61 109h0m-19 16h0m-32 36h0"/><path stroke="#7ca7bf" stroke-width="6.6" d="M0 0m587 333h0m-127 6h0m0 49h0m38 32h0m-33 26h0m-70 347h0m-30 37h0m38 3h0m-40 33h0m22 3h0m-22 13h0m19 2h0m-17 27h0m-12 80h0m-36 32h0m4 10h0m-15 20h0m-37 48h0m12-2h0m-10 7h0m-21 11h0m-19 22h0m6-1h0m-8 6h0m0 8h0m-13 14h0"/><path stroke="#597b9f" stroke-width="6.6" d="M0 0m555 293h0m72 5h0m-72 38h0m15 33h0m-17 73h0m-95 93h0m-73 320h0m-9 22h0m-11 12h0m28 8h0m-15 16h0m-13 8h0m-2 11h0m0 3h0m17 5h0m-8 14h0m-6 21h0m-1 31h0m-35 44h0m-24 13h0m3-6h0m0 5h0m25 1h0m-28 5h0m19 7h0m19-2h0m-69 22h0m4-7h0m11 0h0m17 0h0m-45 17h0m5-1h0m4 0h0m4 5h0m2-2h0m6-2h0m34 0h0m-42 17h0m-25 10h0m0-1h0m-15 10h0m-6 6h0m4 4h0m8-7h0m-17 8h0m2 1h0m1 0h0"/></g><rect x="484.5" y="249.5" width="94.0" height="352.0" rx="2.5" fill="#ffffff" fill-opacity="0.8" stroke="#cccccc" stroke-width="1"/><g fill="#262626" font-family="Liberation Sans, sans-serif" font-size="15.28"><text x="503" y="267" font-size="16.67">clarity</text><circle cx="506.5" cy="285.4" r="4.9" fill="#3b4d73"/><text x="534" y="288.9">I1</text><circle cx="506.5" cy="307.0" r="4.9" fill="#49648a"/><text x="534" y="310.5">SI2</text><circle cx="506.5" cy="328.5" r="4.9" fill="#597b9f"/><text x="534" y="332.0">SI1</text><circle cx="506.5" cy="350.1" r="4.9" fill="#6a92b0"/><text x="534" y="353.6">VS2</text><circle cx="506.5" cy="371.7" r="4.9" fill="#7ca7bf"/><text x="534" y="375.2">VS1</text><circle cx="506.5" cy="393.2" r="4.9" fill="#91bccc"/><text x="534" y="396.8">VVS2</text><circle cx="506.5" cy="414.8" r="4.9" fill="#a9cfd9"/><text x="534" y="418.3">VVS1</text><circle cx="506.5" cy="436.4" r="4.9" fill="#c4e1e5"/><text x="534" y="439.9">IF</text><text x="503" y="463.5" font-size="16.67">depth</text><circle cx="506.5" cy="480.9" r="1.85" fill="#2a3036"/><text x="534" y="484.5">48</text><circle cx="506.5" cy="502.5" r="2.11" fill="#2a3036"/><text x="534" y="506.1">54</text><circle cx="506.5" cy="524.2" r="2.32" fill="#2a3036"/><text x="534" y="527.8">60</text><circle cx="506.5" cy="545.8" r="2.50" fill="#2a3036"/><text x="534" y="549.4">66</text><circle cx="506.5" cy="567.4" r="2.66" fill="#2a3036"/><text x="534" y="571.0">72</text><circle cx="506.5" cy="589.0" r="2.82" fill="#2a3036"/><text x="534" y="592.6">78</text></g><g fill="#262626" font-family="Liberation Sans, sans-serif" font-size="15.28"><text x="86.1" y="633.5" text-anchor="middle">0</text><text x="181.3" y="633.5" text-anchor="middle">1</text><text x="276.5" y="633.5" text-anchor="middle">2</text><text x="371.7" y="633.5" text-anchor="middle">3</text><text x="466.9" y="633.5" text-anchor="middle">4</text><text x="562.2" y="633.5" text-anchor="middle">5</text><text x="68.7" y="600.3" text-anchor="end">0</text><text x="68.7" y="538.8" text-anchor="end">2500</text><text x="68.7" y="477.3" text-anchor="end">5000</text><text x="68.7" y="415.8" text-anchor="end">7500</text><text x="68.7" y="354.3" text-anchor="end">10000</text><text x="68.7" y="292.8" text-anchor="end">12500</text><text x="68.7" y="231.3" text-anchor="end">15000</text><text x="68.7" y="169.8" text-anchor="end">17500</text><text x="334.1" y="654.0" text-anchor="middle" font-size="16.67">carat</text><text transform="translate(17.3 361.2) rotate(-90)" text-anchor="middle" font-size="16.67">price</text></g></svg>
<div id="tb" class="abs"></div>
<div class="abs" style="left:1px;top:720px;width:650px;height:1px;background:#fcfcfc"></div>
<svg class="abs" style="left:0;top:0" width="651" height="724">
 <defs>
  <pattern id="dith" width="2" height="2" patternUnits="userSpaceOnUse">
   <rect x="0" y="0" width="1" height="1" fill="#000"/><rect x="1" y="1" width="1" height="1" fill="#000"/>
   <rect x="1" y="0" width="1" height="1" fill="#bbb"/><rect x="0" y="1" width="1" height="1" fill="#bbb"/>
  </pattern>
  <pattern id="dithbg" width="2" height="2" patternUnits="userSpaceOnUse">
   <rect width="2" height="2" fill="#f0f0f0"/><rect x="1" y="0" width="1" height="1" fill="#fafafa"/><rect x="0" y="1" width="1" height="1" fill="#fafafa"/>
  </pattern>
 </defs>
 <rect x="3" y="685" width="29" height="31" fill="#6d6d6d"/><rect x="3" y="685" width="28" height="30" fill="#ffffff"/><rect x="4" y="686" width="27" height="29" fill="#a0a0a0"/><rect x="4" y="686" width="26" height="28" fill="#e3e8ec"/><rect x="6" y="688" width="23" height="25" fill="#f8f8f8"/><rect x="33" y="685" width="29" height="31" fill="#6d6d6d"/><rect x="33" y="685" width="28" height="30" fill="#ffffff"/><rect x="34" y="686" width="27" height="29" fill="#a0a0a0"/><rect x="34" y="686" width="26" height="28" fill="#e3e8ec"/><rect x="36" y="688" width="23" height="25" fill="url(#dithbg)"/><rect x="63" y="685" width="29" height="31" fill="#6d6d6d"/><rect x="63" y="685" width="28" height="30" fill="#ffffff"/><rect x="64" y="686" width="27" height="29" fill="#a0a0a0"/><rect x="64" y="686" width="26" height="28" fill="#e3e8ec"/><rect x="66" y="688" width="23" height="25" fill="url(#dithbg)"/><rect x="104" y="685" width="31" height="31" fill="#6d6d6d"/><rect x="104" y="685" width="30" height="30" fill="#ffffff"/><rect x="105" y="686" width="29" height="29" fill="#a0a0a0"/><rect x="105" y="686" width="28" height="28" fill="#e3e8ec"/><rect x="107" y="688" width="25" height="25" fill="#f8f8f8"/><rect x="136" y="685" width="32" height="31" fill="#6d6d6d"/><rect x="136" y="685" width="31" height="30" fill="#ffffff"/><rect x="137" y="686" width="30" height="29" fill="#a0a0a0"/><rect x="137" y="686" width="29" height="28" fill="#e3e8ec"/><rect x="139" y="688" width="26" height="25" fill="#f8f8f8"/><rect x="168" y="685" width="30" height="31" fill="#6d6d6d"/><rect x="168" y="685" width="29" height="30" fill="#ffffff"/><rect x="169" y="686" width="28" height="29" fill="#a0a0a0"/><rect x="169" y="686" width="27" height="28" fill="#e3e8ec"/><rect x="171" y="688" width="24" height="25" fill="#f8f8f8"/><rect x="209" y="685" width="30" height="31" fill="#6d6d6d"/><rect x="209" y="685" width="29" height="30" fill="#ffffff"/><rect x="210" y="686" width="28" height="29" fill="#a0a0a0"/><rect x="210" y="686" width="27" height="28" fill="#e3e8ec"/><rect x="212" y="688" width="24" height="25" fill="#f8f8f8"/>
 <path d="M9.5 703.2L18 695.8L26.5 703.2" fill="none" stroke="#000" stroke-width="2.6" stroke-linecap="round" stroke-linejoin="miter"/>
 <rect x="22.3" y="695" width="2.8" height="5.5" fill="#000"/>
 <path d="M11 703.5L18 697.6L25 703.5V711.2H20.4V705.3H15.6V711.2H11Z" fill="#000"/>
 <path d="M56.5 701.5H42.5M48.5 694.5l-7 7 7 7" fill="none" stroke="url(#dith)" stroke-width="5" stroke-linecap="round" stroke-linejoin="round"/>
 <path d="M69.5 701.5H83.5M77.5 694.5l7 7-7 7" fill="none" stroke="url(#dith)" stroke-width="5" stroke-linecap="round" stroke-linejoin="round"/>
 <g fill="#000">
  <path d="M120.2 689.5l4.2 4.2h-2.4v5.8h5.8v-2.4l4.2 4.2-4.2 4.2v-2.4h-5.8v5.8h2.4l-4.2 4.2-4.2-4.2h2.4v-5.8h-5.8v2.4l-4.2-4.2 4.2-4.2v2.4h5.8v-5.8h-2.4Z"/>
 </g>
 <circle cx="150.6" cy="699.6" r="7.2" fill="none" stroke="#000" stroke-width="3.4"/>
 <path d="M155.8 705.2l5 5" stroke="#000" stroke-width="3.4" stroke-linecap="round"/>
 <g stroke="#000" stroke-width="2">
  <path d="M173.4 696h19.3M173.4 702.5h19.3M173.4 709h19.3"/>
 </g>
 <g fill="#000">
  <rect x="176.7" y="693.4" width="4.7" height="5.2" rx="1"/>
  <rect x="185" y="699.9" width="4.5" height="5.2" rx="1"/>
  <rect x="178.2" y="706.4" width="4.8" height="5.2" rx="1"/>
 </g>
 <path d="M215.5 693h13l4.5 4.5v12.7h-17.5Z" fill="none" stroke="#000" stroke-width="2" stroke-linejoin="round"/>
 <rect x="218.5" y="693" width="7.5" height="6" fill="#000"/>
 <rect x="222.5" y="694" width="2.5" height="4" fill="#fff"/>
 <rect x="219" y="704" width="11.5" height="6.5" fill="none" stroke="#000" stroke-width="2"/>
 <g stroke="#a0a0a0" stroke-width="1"><path d="M98.5 688v26M203.5 688v26"/></g>
 <g stroke="#fff" stroke-width="1"><path d="M99.5 688v26M204.5 688v26"/></g>
</svg>
<div id="rw" class="abs"></div>
<svg class="abs" style="left:659px;top:9px" width="17" height="14">
 <rect x="1" y="1" width="15" height="12" fill="#dfe6ea"/>
 <rect x="2" y="2" width="8" height="10" fill="#3f6c9c"/>
 <rect x="3" y="6" width="4" height="5" fill="#7c93b0"/>
 <rect x="11" y="2" width="4" height="10" fill="#eef3f6"/>
 <rect x="13" y="3" width="1" height="4" fill="#8aa"/>
</svg>
<div class="abs" style="left:679px;top:10px;font-size:11.75px;font-weight:bold;color:#fff">Demo of Python</div>
<svg class="abs" style="left:1060px;top:0" width="130" height="30">
 <path d="M14 16.5h10" stroke="#fff" stroke-width="1"/>
 <rect x="60.5" y="11.5" width="9" height="9" fill="none" stroke="#fff" stroke-width="1"/>
 <path d="M106 11l10 10M116 11l-10 10" stroke="#fff" stroke-width="1"/>
</svg>
<div class="panel" style="left:657px;top:32px;width:532px;height:153px"></div>
<div class="sb" style="left:1170px;top:34px;width:17px;height:132px"></div>
<div class="sb" style="left:659px;top:166px;width:528px;height:17px"></div>
<div class="panel" style="left:657px;top:188px;width:532px;height:483px"></div>
<div class="sb" style="left:1170px;top:190px;width:17px;height:463px"></div>
<div class="sb" style="left:659px;top:653px;width:528px;height:16px"></div>
<div class="abs" style="left:676px;top:653px;width:462px;height:16px;background:#5f6b73"></div>
<svg class="abs" style="left:0;top:0" width="1197" height="724">
 <g fill="none" stroke="#aeb4b8" stroke-width="1.1">
  <path d="M1174 46l4.5-4.5 4.5 4.5M1174 155l4.5 4.5 4.5-4.5M669.5 170l-4 4.5 4 4.5M1159.5 170l4 4.5-4 4.5"/>
  <path d="M1174 202l4.5-4.5 4.5 4.5M1174 642l4.5 4.5 4.5-4.5M669.5 656.5l-4 4.5 4 4.5M1159.5 656.5l4 4.5-4 4.5"/>
 </g>
</svg>
<div class="code">import seaborn as sns
import matplotlib.pyplot as plt
sns.set_theme(style=&quot;whitegrid&quot;)

# Load the example diamonds dataset
diamonds = sns.load_dataset(&quot;diamonds&quot;)

# Draw a scatter plot while assigning point colors and sizes to differen
# variables in the dataset
f, ax = plt.subplots(figsize=(6.5, 6.5))
sns.despine(f, left=True, bottom=True)
clarity_ranking = [&quot;I1&quot;, &quot;SI2&quot;, &quot;SI1&quot;, &quot;VS2&quot;, &quot;VS1&quot;, &quot;VVS2&quot;, &quot;VVS1&quot;, &quot;IF
sns.scatterplot(x=&quot;carat&quot;, y=&quot;price&quot;,
                hue=&quot;clarity&quot;, size=&quot;depth&quot;,
                palette=&quot;ch:r=-.2,d=.3_r&quot;,
                hue_order=clarity_ranking,
                sizes=(1, 8), linewidth=0,
                data=diamonds, ax=ax)

plt.show()</div>
<div class="sbtn" style="left:663px;width:115px">Execute script</div>
<div class="sbtn" style="left:825px;width:91px">Load script...</div>
<div class="sbtn" style="left:921px;width:89px">Save script...</div>
<div class="abs" style="left:1195px;top:0;width:2px;height:722px;background:#fff"></div>
<div class="abs" style="left:1195px;top:43px;width:2px;height:1px;background:#d0d0d0"></div>
</body></html>
